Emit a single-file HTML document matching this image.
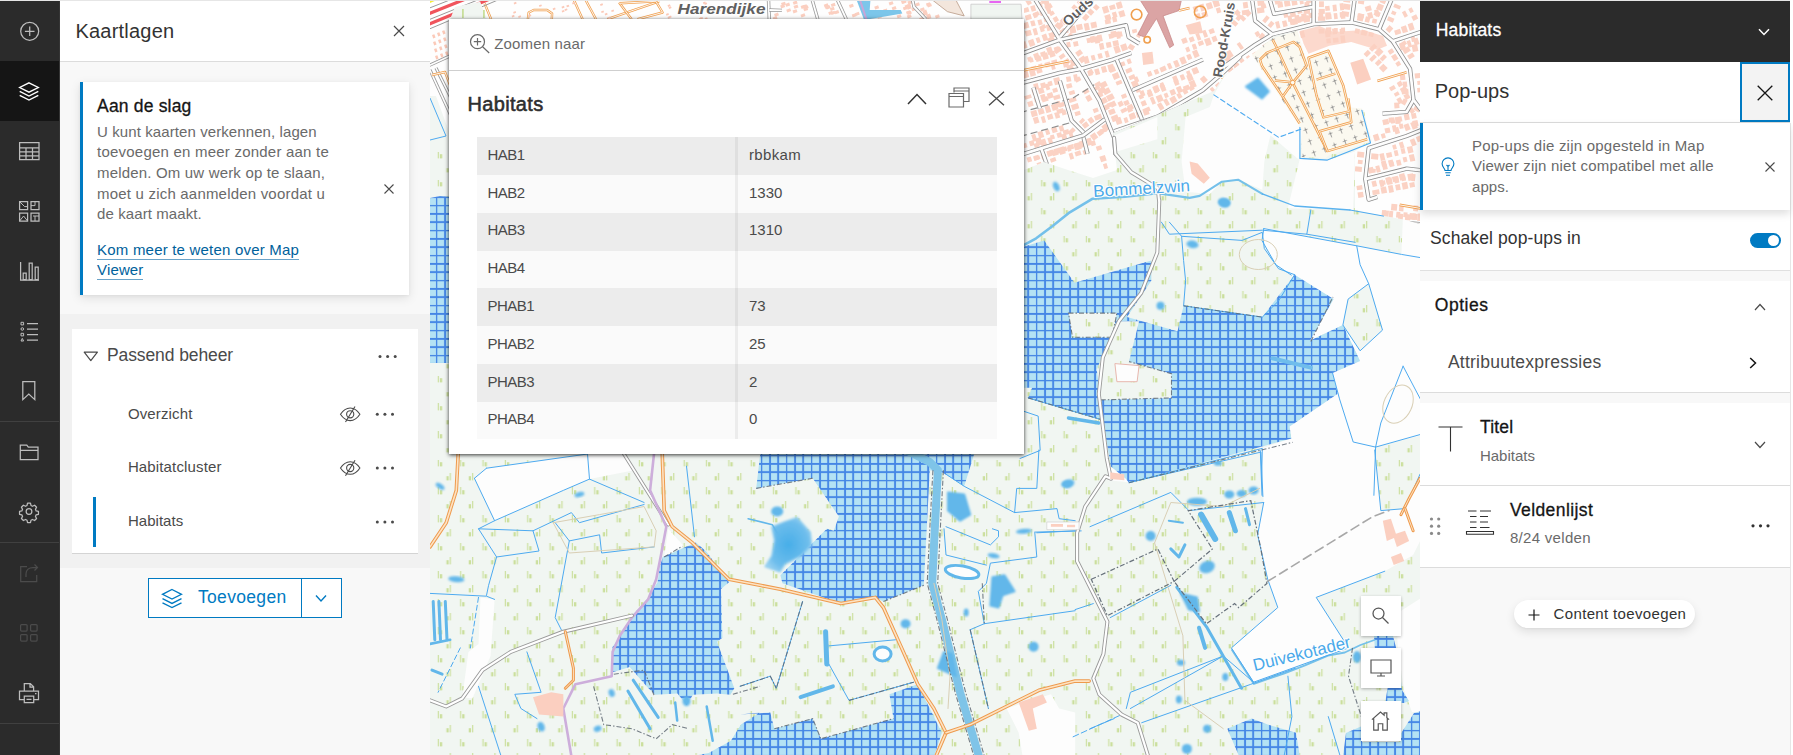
<!DOCTYPE html>
<html lang="nl">
<head>
<meta charset="utf-8">
<title>Map Viewer</title>
<style>
*{box-sizing:border-box;margin:0;padding:0}
html,body{width:1793px;height:755px;overflow:hidden;background:#fff;font-family:"Liberation Sans",sans-serif;color:#323232}
.abs{position:absolute}
#sidebar{left:0;top:0;width:60px;height:755px;background:#2b2b2b}
#sidebar .act{left:0;top:61px;width:60px;height:60px;background:#151515}
#sidebar .sep{left:0;width:60px;height:1px;background:#404040}
#sidebar svg{position:absolute;overflow:visible}
#lpanel{left:60px;top:0;width:370px;height:755px;background:#f8f8f8}
#lpanel .hdr{left:0;top:0;width:370px;height:62px;background:#fff;border-bottom:1px solid #dcdcdc}
.t{position:absolute;white-space:nowrap;line-height:1;z-index:5}
#rpanel{left:1420px;top:0;width:370px;height:755px;background:#f8f8f8}
#map{left:430px;top:0;width:990px;height:755px;overflow:hidden;background:#f1f6f2}
#popup{left:449px;top:19px;width:575px;height:435px;background:#fff;box-shadow:0 1px 4px rgba(0,0,0,.8)}
.row{position:absolute;left:28px;width:520px;height:37.78px}
.row.d{background:#ececec}
.row.l{background:#fafafa}
.rt{position:absolute;font-size:15px;color:#4a4a4a;line-height:1;white-space:nowrap}
.rt.k{left:38.500px}
.rt.v{left:300px}
.mbtn{position:absolute;left:1361px;width:40px;height:40px;background:#fff;box-shadow:0 1px 3px rgba(0,0,0,.3)}
</style>
</head>
<body>
<div class="abs" style="left:0;top:0;width:1790px;height:1px;background:#e6e6e6;z-index:20"></div>
<div id="sidebar" class="abs">
<div class="abs act"></div>
<div class="abs sep" style="top:421px"></div>
<div class="abs sep" style="top:542px"></div>
<div class="abs sep" style="top:723px"></div>
<div class="abs" style="left:59px;top:0;width:1px;height:755px;background:#353535"></div>
<svg style="left:0;top:0" width="60" height="755" viewBox="0 0 60 755" fill="none" stroke="#bdbdbd" stroke-width="1.25">
<!-- add -->
<circle cx="29.7" cy="31.3" r="9"/><path d="M29.7 26.5v9.6M24.9 31.3h9.6"/>
<!-- layers active -->
<g stroke="#fff" stroke-width="1.4"><path d="M29 82.8l9.3 4.7-9.3 4.7-9.3-4.7z"/><path d="M19.700 91.300l9.300 4.700 9.300-4.700"/><path d="M19.700 95.300l9.300 4.700 9.300-4.700"/></g>
<!-- table -->
<path d="M19.600 142.600h19.400v17h-19.400zM19.600 147.800h19.400M19.600 151.800h19.400M19.600 155.800h19.400M26 147.800v11.800M32.500 147.800v11.800"/>
<!-- basemap -->
<path d="M19.600 201.600h8v8h-8zM31 201.600h8v8h-8zM19.600 213h8v8h-8zM31 213h8v8h-8z"/>
<path d="M19.600 201.600l5 5h3M35 201.600v4h-4M19.600 221l4-5 4 5M33 216h6M35 216v5" stroke-width="1"/>
<!-- chart -->
<path d="M20.600 262v18h18.400"/><path d="M23.200 273h3v6.600h-3zM29.200 263h3v16.600h-3zM35.200 267h3v12.600h-3z"/>
<!-- legend -->
<path d="M27 323.500h11M27 329h11M27 334.500h11M27 340h11"/><path d="M21 322.300h2.600v2.600h-2.600zM21 333.300h2.600v2.600h-2.600z" stroke-width="1"/><circle cx="22.300" cy="329" r="1.300" stroke-width="1"/><path d="M21 341l1.300-2.600 1.300 2.600z" stroke-width="1"/>
<!-- bookmark -->
<path d="M22.800 381.600h12v18l-6-5.500-6 5.500z"/>
<!-- folder -->
<path d="M20.300 459.600v-14.500h6.500l1.500 2h9.700v12.500zM20.300 450.300h17.700"/>
<!-- gear -->
<g transform="translate(29 511.500) scale(.86) translate(-29 -511.500)" stroke-width="1.450"><circle cx="29" cy="511.500" r="3.300"/>
<path d="M27.300 501.800h3.400l.6 2.700 1.700.9 2.500-1.200 2.300 2.400-1.300 2.400.8 1.800 2.700.6v3.400l-2.700.6-.8 1.800 1.300 2.400-2.300 2.400-2.500-1.200-1.700.9-.6 2.700h-3.400l-.6-2.700-1.700-.9-2.500 1.200-2.300-2.400 1.300-2.400-.8-1.800-2.700-.6v-3.400l2.700-.6.8-1.800-1.300-2.400 2.300-2.400 2.500 1.200 1.700-.9z" stroke-linejoin="round"/></g>
<!-- share disabled -->
<g stroke="#4b4b4b"><path d="M27 566.500h-6.300v15h16v-6.500"/><path d="M26 577v-3c0-4 3-6.500 7-6.500h4.500M34.500 564.500l3 3-3 3"/></g>
<!-- grid disabled -->
<g stroke="#4b4b4b"><rect x="20.600" y="624.600" width="6.500" height="6.500" rx="1"/><rect x="30.600" y="624.600" width="6.500" height="6.500" rx="1"/><rect x="20.600" y="634.600" width="6.500" height="6.500" rx="1"/><rect x="30.600" y="634.600" width="6.500" height="6.500" rx="1"/></g>
<!-- print -->
<path d="M24.300 691v-7.500h6l3.300 3.300v4.200M30 683.500v3.500h3.500"/><path d="M24 699.500h-4.500v-8.500h19v8.500h-4.500"/><path d="M24.300 696h9.400v6.500h-9.400zM26.500 699.300h5M35 693.500h1.500"/>
</svg>
</div>
<div id="map" class="abs"><svg width="990" height="755" viewBox="430 0 990 755" style="position:absolute;left:0;top:0">
<defs>
<pattern id="tick" x="1106.5" y="543" width="22.35" height="28" patternUnits="userSpaceOnUse">
<g fill="#cee1a4"><rect x="1.700" y="0" width="1.300" height="7.400"/><rect x="3.900" y="3.200" width="2.300" height="4.200" fill="#cbdf9d"/>
<rect x="10.400" y="17.200" width="2.300" height="4.200" fill="#cbdf9d"/><rect x="13.600" y="14" width="1.300" height="7.400"/></g>
</pattern>
<pattern id="hatch" x="1185.95" y="354.95" width="25" height="25" patternUnits="userSpaceOnUse">
<rect width="25" height="25" fill="#b4e2f4"/>
<g fill="#4486e5"><rect x="0" width="1.300" height="25"/><rect x="8.150" width="1.900" height="25"/><rect x="16.250" width="1.900" height="25"/>
<rect y="0" width="25" height="1.300"/><rect y="8" width="25" height="1.900"/><rect y="16.200" width="25" height="1.900"/></g>
</pattern>
<pattern id="urb" width="12" height="10" patternUnits="userSpaceOnUse" patternTransform="rotate(-24)">
<rect width="12" height="10" fill="#fefefe"/><rect x="1" y="1.500" width="4.200" height="4.200" fill="#fbd0c1"/><rect x="6.800" y="1.500" width="4.200" height="4.200" fill="#fbd0c1"/>
</pattern>
<pattern id="urbt" width="14" height="9" patternUnits="userSpaceOnUse" patternTransform="rotate(-20)">
<rect width="14" height="9" fill="#fefefe"/><rect x="1" y="1.500" width="3" height="3" fill="#fbd0c1"/><path d="M7 0v9M0 7h14" stroke="#f3a968" stroke-width="1" fill="none"/>
</pattern>
<pattern id="cem" width="11" height="12" patternUnits="userSpaceOnUse" patternTransform="rotate(-20)">
<rect width="11" height="12" fill="#fbf9f0"/><path d="M5.500 2.500v6M3.500 4.500h4" stroke="#8a8a8a" stroke-width=".8" fill="none"/>
</pattern>
<radialGradient id="lake" cx="50%" cy="50%" r="60%"><stop offset="0" stop-color="#48aee8"/><stop offset=".7" stop-color="#6dbdec"/><stop offset="1" stop-color="#9dd3f2"/></radialGradient>
<filter id="soft" x="-20%" y="-20%" width="140%" height="140%"><feGaussianBlur stdDeviation="0.9"/></filter>
</defs>
<rect x="430" y="0" width="990" height="755" fill="#f1f6f2"/>
<rect x="430" y="0" width="990" height="755" fill="url(#tick)"/>
<polygon points="474.4,478.3 486.5,468.2 587.5,454.0 623.9,454.0 634.0,470.2 589.5,479.1 563.3,490.4 494.6,520.7" fill="#fdfdfd"/>
<polygon points="480.5,597.4 494.6,599.4 490.6,656.0 472.4,698.4 462.3,697.2 468.4,651.9 478.5,643.9" fill="#fdfdfd"/>
<polygon points="668.3,528.8 683.6,546.1 664.2,557.0" fill="#fdfdfd"/>
<polygon points="1006.6,708.5 1051.0,694.3 1059.1,708.5 1075.2,712.5 1075.2,756.9 1022.7,756.9 1018.7,732.7" fill="#fdfdfd"/>
<polygon points="1114.9,135.3 1157.3,117.1 1157.3,139.3 1116.9,151.5" fill="#fdfdfd"/>
<polygon points="1185.6,117.1 1209.8,107.0 1213.9,94.9 1224.0,76.7 1254.2,52.5 1302.7,129.2 1298.7,159.5 1270.4,135.3 1264.3,161.6 1262.3,189.8 1238.1,179.7 1221.9,181.7 1209.8,193.9 1185.6,191.8 1181.6,161.6" fill="#fdfdfd"/>
<polygon points="1299.9,158.4 1327.4,160.1 1355.0,151.5 1353.2,210.1 1287.8,208.3" fill="#fdfdfd"/>
<polygon points="1263.8,228.6 1356.7,245.8 1401.4,254.4 1403.1,213.1 1422.1,213.1 1422.1,435.1 1375.6,447.1 1373.9,495.3 1262.0,495.3 1260.3,450.6 1250.0,452.3 1291.3,438.5 1289.6,426.5 1337.7,393.8 1332.6,373.1 1360.1,361.1 1342.9,325.0 1310.2,340.4 1333.6,299.1 1291.3,275.1 1275.8,264.7 1262.0,240.6" fill="#fdfdfd"/>
<polygon points="1261.6,450.0 1374.7,450.0 1380.8,510.6 1405.0,508.6 1420.0,474.2 1425.2,474.2 1425.2,530.8 1413.1,555.0 1384.8,571.2 1316.2,597.4 1348.5,647.9 1253.6,682.2 1231.4,647.9 1277.8,607.5 1267.7,579.2 1257.6,534.8 1263.7,502.5" fill="#fdfdfd"/>
<polygon points="1396.0,614.0 1421.0,598.0 1421.0,712.0 1412.0,712.0 1404.0,690.0 1398.0,650.0" fill="#fdfdfd"/>
<polygon points="1108.2,468.2 1126.3,468.2 1128.4,482.3 1108.2,480.3" fill="#fdfdfd"/>
<polygon points="1342.9,325.0 1348.1,299.1 1368.7,283.7 1382.5,330.1 1360.1,350.8" fill="#f1f6f2"/><polygon points="1342.9,325.0 1348.1,299.1 1368.7,283.7 1382.5,330.1 1360.1,350.8" fill="url(#tick)"/>
<clipPath id="uclip"><polygon points="1024.0,0.0 1420.0,0.0 1420.0,224.0 1406.0,220.0 1379.0,215.0 1355.0,210.0 1355.0,151.0 1370.0,143.0 1364.0,110.0 1352.0,110.0 1329.0,50.0 1303.0,60.0 1296.0,31.0 1274.0,36.0 1255.0,53.0 1224.0,76.0 1214.0,91.0 1190.0,101.0 1157.0,115.0 1113.0,133.0 1115.0,153.0 1117.0,170.0 1093.0,178.0 1068.0,170.0 1044.0,162.0 1024.0,170.0"/></clipPath>
<polygon points="1024.0,0.0 1420.0,0.0 1420.0,224.0 1406.0,220.0 1379.0,215.0 1355.0,210.0 1355.0,151.0 1370.0,143.0 1364.0,110.0 1352.0,110.0 1329.0,50.0 1303.0,60.0 1296.0,31.0 1274.0,36.0 1255.0,53.0 1224.0,76.0 1214.0,91.0 1190.0,101.0 1157.0,115.0 1113.0,133.0 1115.0,153.0 1117.0,170.0 1093.0,178.0 1068.0,170.0 1044.0,162.0 1024.0,170.0" fill="#fefefe"/>
<g clip-path="url(#uclip)">
<g fill="#fbd2c4">
<rect x="1026.0" y="-0.2" width="5.2" height="4.6" transform="rotate(59 1028.6 2.2)"/>
<rect x="1038.9" y="-8.2" width="3.7" height="5.9" transform="rotate(59 1040.8 -5.3)"/>
<rect x="1042.2" y="-1.7" width="3.8" height="5.7" transform="rotate(59 1044.1 1.1)"/>
<rect x="1034.1" y="11.3" width="4.2" height="6.3" transform="rotate(59 1036.2 14.4)"/>
<rect x="1046.3" y="3.2" width="4.6" height="7.3" transform="rotate(59 1048.6 6.8)"/>
<rect x="1050.0" y="10.9" width="4.0" height="4.8" transform="rotate(59 1051.9 13.2)"/>
<rect x="1040.7" y="24.2" width="4.1" height="6.1" transform="rotate(59 1042.8 27.3)"/>
<rect x="1053.3" y="17.0" width="5.0" height="4.6" transform="rotate(59 1055.8 19.3)"/>
<rect x="1057.6" y="22.5" width="4.7" height="5.3" transform="rotate(59 1060.0 25.2)"/>
<rect x="1048.6" y="35.9" width="4.3" height="6.8" transform="rotate(59 1050.8 39.3)"/>
<rect x="1060.6" y="28.7" width="5.0" height="6.0" transform="rotate(59 1063.1 31.7)"/>
<rect x="1055.7" y="46.9" width="4.3" height="7.3" transform="rotate(54 1057.9 50.5)"/>
<rect x="1060.1" y="53.4" width="4.0" height="5.9" transform="rotate(54 1062.1 56.4)"/>
<rect x="1063.8" y="58.7" width="5.0" height="7.0" transform="rotate(54 1066.3 62.2)"/>
<rect x="1076.5" y="49.9" width="5.1" height="6.1" transform="rotate(54 1079.0 53.0)"/>
<rect x="1067.4" y="65.2" width="6.0" height="5.8" transform="rotate(54 1070.4 68.1)"/>
<rect x="1079.8" y="56.2" width="5.4" height="6.3" transform="rotate(54 1082.4 59.4)"/>
<rect x="1075.7" y="76.7" width="4.3" height="5.6" transform="rotate(60 1077.9 79.5)"/>
<rect x="1088.2" y="69.6" width="4.8" height="4.9" transform="rotate(60 1090.6 72.1)"/>
<rect x="1084.0" y="88.6" width="4.2" height="5.6" transform="rotate(60 1086.1 91.4)"/>
<rect x="1095.6" y="81.4" width="4.7" height="6.0" transform="rotate(60 1097.9 84.5)"/>
<rect x="1085.9" y="95.6" width="5.8" height="5.2" transform="rotate(60 1088.8 98.2)"/>
<rect x="1099.1" y="86.8" width="5.8" height="7.3" transform="rotate(60 1102.0 90.5)"/>
<rect x="1093.7" y="107.8" width="4.2" height="5.1" transform="rotate(69 1095.8 110.3)"/>
<rect x="1107.3" y="102.8" width="4.3" height="4.4" transform="rotate(69 1109.4 105.0)"/>
<rect x="1095.6" y="113.5" width="5.0" height="7.3" transform="rotate(69 1098.1 117.2)"/>
<rect x="1109.4" y="108.5" width="5.1" height="6.4" transform="rotate(69 1111.9 111.7)"/>
<rect x="1112.1" y="114.9" width="5.8" height="6.8" transform="rotate(69 1115.0 118.3)"/>
<rect x="1101.4" y="127.4" width="3.9" height="6.3" transform="rotate(69 1103.4 130.6)"/>
<rect x="1119.4" y="142.5" width="4.5" height="4.6" transform="rotate(85 1121.7 144.8)"/>
<rect x="1123.3" y="152.8" width="4.5" height="4.5" transform="rotate(49 1125.6 155.0)"/>
<rect x="1117.2" y="167.4" width="4.0" height="5.2" transform="rotate(49 1119.2 170.0)"/>
<rect x="1128.6" y="156.7" width="3.9" height="6.9" transform="rotate(49 1130.6 160.2)"/>
<rect x="1131.6" y="180.2" width="4.8" height="4.7" transform="rotate(31 1134.0 182.6)"/>
<rect x="1137.5" y="183.6" width="5.7" height="4.9" transform="rotate(31 1140.3 186.0)"/>
<rect x="1144.3" y="187.1" width="4.0" height="6.0" transform="rotate(31 1146.3 190.1)"/>
<rect x="1146.7" y="192.5" width="5.8" height="6.5" transform="rotate(90 1149.6 195.8)"/>
<rect x="1163.1" y="192.4" width="4.0" height="6.7" transform="rotate(90 1165.1 195.8)"/>
<rect x="1121.6" y="133.8" width="4.4" height="5.1" transform="rotate(-18 1123.8 136.3)"/>
<rect x="1115.8" y="117.5" width="5.7" height="6.8" transform="rotate(-18 1118.7 120.9)"/>
<rect x="1128.5" y="131.0" width="4.2" height="6.0" transform="rotate(-18 1130.6 134.0)"/>
<rect x="1124.2" y="117.5" width="3.7" height="5.2" transform="rotate(-18 1126.0 120.1)"/>
<rect x="1134.4" y="128.8" width="6.0" height="5.7" transform="rotate(-18 1137.4 131.6)"/>
<rect x="1129.3" y="113.6" width="6.0" height="5.5" transform="rotate(-18 1132.3 116.4)"/>
<rect x="1142.0" y="126.2" width="4.1" height="5.0" transform="rotate(-18 1144.0 128.7)"/>
<rect x="1136.4" y="111.3" width="5.7" height="5.8" transform="rotate(-18 1139.2 114.2)"/>
<rect x="1149.2" y="124.1" width="3.8" height="6.4" transform="rotate(-18 1151.1 127.3)"/>
<rect x="1143.4" y="109.2" width="5.5" height="5.8" transform="rotate(-18 1146.1 112.1)"/>
<rect x="1166.2" y="116.2" width="4.4" height="6.8" transform="rotate(-30 1168.4 119.6)"/>
<rect x="1158.4" y="102.8" width="4.6" height="7.2" transform="rotate(-30 1160.7 106.4)"/>
<rect x="1172.2" y="112.7" width="3.9" height="4.9" transform="rotate(-30 1174.1 115.1)"/>
<rect x="1164.5" y="98.8" width="4.0" height="6.9" transform="rotate(-30 1166.5 102.2)"/>
<rect x="1178.5" y="109.1" width="4.5" height="6.0" transform="rotate(-30 1180.7 112.1)"/>
<rect x="1170.4" y="96.5" width="6.0" height="6.3" transform="rotate(-30 1173.4 99.7)"/>
<rect x="1184.8" y="105.4" width="4.7" height="7.0" transform="rotate(-30 1187.1 108.9)"/>
<rect x="1177.3" y="93.1" width="4.2" height="5.3" transform="rotate(-30 1179.4 95.7)"/>
<rect x="1190.9" y="101.9" width="4.2" height="5.7" transform="rotate(-30 1193.1 104.7)"/>
<rect x="1182.8" y="88.2" width="4.5" height="5.8" transform="rotate(-30 1185.1 91.1)"/>
<rect x="1197.2" y="98.0" width="4.7" height="7.2" transform="rotate(-30 1199.5 101.5)"/>
<rect x="1189.1" y="85.8" width="4.9" height="4.5" transform="rotate(-30 1191.6 88.0)"/>
<rect x="1211.4" y="87.1" width="3.6" height="6.8" transform="rotate(-41 1213.2 90.5)"/>
<rect x="1201.1" y="76.5" width="5.4" height="6.1" transform="rotate(-41 1203.8 79.5)"/>
<rect x="1216.5" y="82.8" width="5.0" height="6.8" transform="rotate(-41 1219.0 86.2)"/>
<rect x="1229.7" y="70.9" width="4.3" height="6.7" transform="rotate(-43 1231.8 74.2)"/>
<rect x="1219.1" y="59.9" width="5.5" height="7.1" transform="rotate(-43 1221.8 63.5)"/>
<rect x="1235.1" y="66.8" width="4.9" height="5.9" transform="rotate(-43 1237.5 69.8)"/>
<rect x="1224.8" y="55.8" width="4.9" height="5.8" transform="rotate(-43 1227.2 58.7)"/>
<rect x="1226.5" y="50.7" width="5.8" height="7.2" transform="rotate(148 1229.4 54.3)"/>
<rect x="1234.5" y="64.0" width="6.0" height="6.9" transform="rotate(148 1237.5 67.4)"/>
<rect x="1221.4" y="56.6" width="4.7" height="4.6" transform="rotate(148 1223.8 58.9)"/>
<rect x="1228.3" y="67.2" width="5.3" height="6.8" transform="rotate(148 1231.0 70.5)"/>
<rect x="1228.2" y="67.0" width="5.4" height="6.4" transform="rotate(-35 1230.9 70.2)"/>
<rect x="1219.2" y="55.3" width="6.0" height="5.1" transform="rotate(-35 1222.2 57.9)"/>
<rect x="1234.6" y="62.7" width="4.8" height="7.4" transform="rotate(-35 1237.0 66.4)"/>
<rect x="1226.5" y="51.7" width="4.7" height="5.9" transform="rotate(-35 1228.8 54.7)"/>
<rect x="1240.5" y="58.7" width="4.4" height="6.6" transform="rotate(-35 1242.7 62.0)"/>
<rect x="1247.0" y="55.5" width="3.6" height="5.4" transform="rotate(-35 1248.8 58.2)"/>
<rect x="1238.4" y="42.3" width="3.8" height="7.4" transform="rotate(-35 1240.3 46.0)"/>
<rect x="1253.3" y="52.2" width="3.9" height="5.2" transform="rotate(-35 1255.2 54.8)"/>
<rect x="1263.3" y="44.1" width="3.9" height="5.7" transform="rotate(-31 1265.3 47.0)"/>
<rect x="1255.4" y="31.6" width="4.2" height="4.8" transform="rotate(-31 1257.5 34.0)"/>
<rect x="1269.0" y="41.3" width="5.4" height="4.7" transform="rotate(-31 1271.7 43.7)"/>
<rect x="1279.6" y="36.1" width="3.8" height="7.2" transform="rotate(-14 1281.5 39.8)"/>
<rect x="1275.8" y="21.4" width="3.8" height="7.0" transform="rotate(-14 1277.8 24.8)"/>
<rect x="1282.6" y="20.6" width="4.4" height="6.1" transform="rotate(-14 1284.9 23.6)"/>
<rect x="1293.4" y="33.0" width="3.9" height="6.0" transform="rotate(-14 1295.4 36.0)"/>
<rect x="1290.0" y="20.2" width="4.0" height="4.6" transform="rotate(-14 1292.0 22.4)"/>
<rect x="1300.2" y="31.0" width="4.4" height="6.7" transform="rotate(-14 1302.4 34.3)"/>
<rect x="1296.8" y="17.4" width="4.0" height="5.4" transform="rotate(-14 1298.8 20.1)"/>
<rect x="1303.3" y="16.1" width="5.4" height="6.1" transform="rotate(-14 1306.0 19.1)"/>
<rect x="1318.6" y="28.9" width="5.9" height="4.7" transform="rotate(-3 1321.6 31.2)"/>
<rect x="1318.5" y="12.9" width="4.8" height="6.9" transform="rotate(-3 1320.9 16.4)"/>
<rect x="1326.1" y="27.3" width="5.3" height="7.3" transform="rotate(-3 1328.8 30.9)"/>
<rect x="1325.4" y="12.3" width="5.4" height="6.3" transform="rotate(-3 1328.1 15.4)"/>
<rect x="1334.1" y="28.0" width="3.7" height="4.8" transform="rotate(-3 1335.9 30.4)"/>
<rect x="1341.1" y="27.6" width="4.0" height="4.7" transform="rotate(-3 1343.1 29.9)"/>
<rect x="1339.8" y="12.1" width="5.3" height="5.2" transform="rotate(-3 1342.4 14.7)"/>
<rect x="1354.8" y="28.7" width="4.7" height="4.9" transform="rotate(14 1357.1 31.2)"/>
<rect x="1357.6" y="13.7" width="6.0" height="7.3" transform="rotate(14 1360.6 17.3)"/>
<rect x="1361.1" y="30.2" width="6.0" height="5.3" transform="rotate(14 1364.2 32.9)"/>
<rect x="1365.2" y="16.6" width="4.6" height="5.8" transform="rotate(14 1367.5 19.5)"/>
<rect x="1368.7" y="32.3" width="4.9" height="4.4" transform="rotate(14 1371.2 34.5)"/>
<rect x="1372.2" y="18.8" width="4.6" height="4.5" transform="rotate(14 1374.5 21.1)"/>
<rect x="1386.9" y="26.0" width="5.1" height="6.0" transform="rotate(41 1389.4 29.0)"/>
<rect x="1399.8" y="42.8" width="5.4" height="7.0" transform="rotate(-18 1402.5 46.3)"/>
<rect x="1394.7" y="29.6" width="6.1" height="4.8" transform="rotate(-18 1397.8 32.1)"/>
<rect x="1407.5" y="40.5" width="3.7" height="6.9" transform="rotate(-18 1409.3 44.0)"/>
<rect x="1401.7" y="25.9" width="5.4" height="6.8" transform="rotate(-18 1404.4 29.3)"/>
<rect x="1413.7" y="38.1" width="4.9" height="6.9" transform="rotate(-18 1416.1 41.5)"/>
<rect x="1408.6" y="23.2" width="5.1" height="7.1" transform="rotate(-18 1411.2 26.8)"/>
<rect x="1027.7" y="56.8" width="4.2" height="4.5" transform="rotate(-20 1029.8 59.0)"/>
<rect x="1022.7" y="41.4" width="3.9" height="6.9" transform="rotate(-20 1024.6 44.9)"/>
<rect x="1034.0" y="53.3" width="5.2" height="6.4" transform="rotate(-20 1036.5 56.5)"/>
<rect x="1028.8" y="39.6" width="5.6" height="6.6" transform="rotate(-20 1031.6 42.9)"/>
<rect x="1040.6" y="51.6" width="5.2" height="4.6" transform="rotate(-20 1043.3 53.9)"/>
<rect x="1036.3" y="37.5" width="3.8" height="5.2" transform="rotate(-20 1038.2 40.1)"/>
<rect x="1047.1" y="47.2" width="5.4" height="7.3" transform="rotate(-20 1049.8 50.9)"/>
<rect x="1042.5" y="34.2" width="4.8" height="6.5" transform="rotate(-20 1044.9 37.4)"/>
<rect x="1054.2" y="46.7" width="5.2" height="4.6" transform="rotate(-20 1056.8 49.0)"/>
<rect x="1049.0" y="32.5" width="5.5" height="5.3" transform="rotate(-20 1051.7 35.1)"/>
<rect x="1066.7" y="42.1" width="3.8" height="5.2" transform="rotate(-12 1068.6 44.7)"/>
<rect x="1062.9" y="27.9" width="5.3" height="5.3" transform="rotate(-12 1065.5 30.5)"/>
<rect x="1073.4" y="41.5" width="4.8" height="4.8" transform="rotate(-12 1075.8 43.8)"/>
<rect x="1069.7" y="26.1" width="6.0" height="7.2" transform="rotate(-12 1072.7 29.7)"/>
<rect x="1076.5" y="24.3" width="6.0" height="5.7" transform="rotate(-12 1079.5 27.2)"/>
<rect x="1086.8" y="37.8" width="6.0" height="5.0" transform="rotate(-12 1089.8 40.4)"/>
<rect x="1084.3" y="23.1" width="4.9" height="7.3" transform="rotate(-12 1086.8 26.7)"/>
<rect x="1094.6" y="36.2" width="4.9" height="7.1" transform="rotate(-12 1097.0 39.8)"/>
<rect x="1090.9" y="22.1" width="5.8" height="5.9" transform="rotate(-12 1093.8 25.0)"/>
<rect x="1108.8" y="33.7" width="4.4" height="4.8" transform="rotate(-12 1111.0 36.1)"/>
<rect x="1105.0" y="19.6" width="5.7" height="4.4" transform="rotate(-12 1107.8 21.8)"/>
<rect x="1116.2" y="31.6" width="3.9" height="7.2" transform="rotate(-12 1118.1 35.1)"/>
<rect x="1112.5" y="16.6" width="4.3" height="5.5" transform="rotate(-12 1114.7 19.3)"/>
<rect x="1117.0" y="31.7" width="5.1" height="5.5" transform="rotate(77 1119.6 34.4)"/>
<rect x="1132.8" y="28.7" width="3.7" height="4.7" transform="rotate(77 1134.6 31.0)"/>
<rect x="1128.3" y="44.6" width="5.9" height="5.1" transform="rotate(32 1131.3 47.2)"/>
<rect x="1137.1" y="32.0" width="4.1" height="5.5" transform="rotate(32 1139.1 34.8)"/>
<rect x="1068.0" y="33.5" width="5.6" height="6.3" transform="rotate(-49 1070.9 36.6)"/>
<rect x="1056.0" y="22.7" width="5.0" height="6.6" transform="rotate(-49 1058.5 26.0)"/>
<rect x="1061.0" y="17.9" width="5.5" height="6.3" transform="rotate(-49 1063.8 21.0)"/>
<rect x="1082.8" y="14.9" width="5.9" height="4.8" transform="rotate(-49 1085.8 17.3)"/>
<rect x="1073.0" y="4.8" width="4.3" height="6.6" transform="rotate(-49 1075.2 8.1)"/>
<rect x="1088.1" y="9.4" width="5.2" height="5.3" transform="rotate(-49 1090.8 12.1)"/>
<rect x="1077.9" y="0.1" width="4.0" height="4.9" transform="rotate(-49 1079.9 2.6)"/>
<rect x="1093.9" y="4.8" width="4.8" height="5.1" transform="rotate(-49 1096.3 7.4)"/>
<rect x="1081.5" y="-5.9" width="4.7" height="4.8" transform="rotate(-49 1083.9 -3.5)"/>
<rect x="1087.9" y="71.0" width="4.5" height="4.7" transform="rotate(-16 1090.2 73.4)"/>
<rect x="1083.8" y="56.4" width="5.0" height="7.1" transform="rotate(-16 1086.3 60.0)"/>
<rect x="1094.9" y="68.8" width="4.6" height="6.0" transform="rotate(-16 1097.2 71.8)"/>
<rect x="1091.3" y="55.2" width="3.8" height="5.2" transform="rotate(-16 1093.1 57.8)"/>
<rect x="1101.6" y="66.2" width="4.9" height="6.3" transform="rotate(-16 1104.0 69.4)"/>
<rect x="1098.0" y="53.4" width="4.3" height="5.1" transform="rotate(-16 1100.1 56.0)"/>
<rect x="1108.1" y="64.4" width="6.0" height="6.9" transform="rotate(-16 1111.1 67.9)"/>
<rect x="1105.3" y="51.0" width="3.7" height="6.5" transform="rotate(-16 1107.1 54.3)"/>
<rect x="1119.9" y="61.9" width="5.1" height="4.4" transform="rotate(-20 1122.4 64.1)"/>
<rect x="1114.3" y="45.9" width="5.7" height="7.0" transform="rotate(-20 1117.2 49.4)"/>
<rect x="1127.2" y="58.9" width="3.9" height="4.9" transform="rotate(-20 1129.1 61.3)"/>
<rect x="1121.1" y="44.0" width="6.0" height="6.6" transform="rotate(-20 1124.1 47.3)"/>
<rect x="1110.0" y="66.7" width="4.7" height="6.1" transform="rotate(67 1112.4 69.7)"/>
<rect x="1113.0" y="72.9" width="5.9" height="6.3" transform="rotate(67 1116.0 76.0)"/>
<rect x="1126.7" y="67.4" width="4.2" height="6.3" transform="rotate(67 1128.9 70.6)"/>
<rect x="1117.1" y="79.6" width="3.8" height="6.0" transform="rotate(67 1119.0 82.6)"/>
<rect x="1130.0" y="74.0" width="4.2" height="6.2" transform="rotate(67 1132.0 77.1)"/>
<rect x="1132.0" y="80.5" width="6.0" height="6.3" transform="rotate(67 1134.9 83.6)"/>
<rect x="1121.9" y="93.5" width="4.2" height="5.1" transform="rotate(67 1124.0 96.1)"/>
<rect x="1135.9" y="87.9" width="4.4" height="4.5" transform="rotate(67 1138.1 90.1)"/>
<rect x="1124.2" y="100.2" width="4.7" height="5.2" transform="rotate(67 1126.5 102.8)"/>
<rect x="1139.2" y="94.4" width="4.2" height="4.5" transform="rotate(67 1141.2 96.6)"/>
<rect x="1127.1" y="106.8" width="5.3" height="5.0" transform="rotate(67 1129.7 109.3)"/>
<rect x="1141.3" y="100.9" width="4.9" height="5.0" transform="rotate(67 1143.8 103.4)"/>
<rect x="1129.8" y="113.3" width="5.7" height="5.1" transform="rotate(67 1132.7 115.9)"/>
<rect x="1144.4" y="106.4" width="4.3" height="7.3" transform="rotate(67 1146.6 110.0)"/>
<rect x="1140.3" y="90.7" width="4.2" height="5.7" transform="rotate(-23 1142.4 93.5)"/>
<rect x="1134.4" y="76.8" width="4.0" height="5.6" transform="rotate(-23 1136.3 79.5)"/>
<rect x="1147.5" y="89.5" width="4.0" height="4.6" transform="rotate(-23 1149.5 91.8)"/>
<rect x="1153.2" y="85.5" width="5.8" height="6.6" transform="rotate(-23 1156.1 88.8)"/>
<rect x="1147.4" y="71.4" width="4.4" height="5.0" transform="rotate(-23 1149.6 73.8)"/>
<rect x="1160.7" y="82.5" width="3.7" height="6.4" transform="rotate(-23 1162.6 85.7)"/>
<rect x="1154.3" y="69.3" width="4.4" height="4.9" transform="rotate(-23 1156.5 71.8)"/>
<rect x="1160.1" y="66.6" width="6.0" height="4.8" transform="rotate(-23 1163.1 69.0)"/>
<rect x="1173.2" y="75.8" width="4.5" height="6.9" transform="rotate(-23 1175.4 79.2)"/>
<rect x="1167.8" y="63.1" width="3.7" height="5.8" transform="rotate(-23 1169.7 66.0)"/>
<rect x="1180.5" y="74.6" width="4.1" height="5.5" transform="rotate(-23 1182.5 77.4)"/>
<rect x="1174.2" y="60.3" width="4.6" height="6.8" transform="rotate(-23 1176.6 63.7)"/>
<rect x="1186.7" y="70.9" width="3.7" height="4.6" transform="rotate(-23 1188.5 73.2)"/>
<rect x="1180.3" y="57.0" width="5.5" height="7.1" transform="rotate(-23 1183.0 60.5)"/>
<rect x="1192.3" y="67.6" width="6.0" height="6.3" transform="rotate(-23 1195.3 70.7)"/>
<rect x="1187.1" y="54.3" width="4.4" height="5.2" transform="rotate(-23 1189.3 57.0)"/>
<rect x="1193.2" y="50.2" width="5.2" height="7.2" transform="rotate(-23 1195.8 53.8)"/>
<rect x="1022.4" y="70.7" width="6.0" height="7.3" transform="rotate(-15 1025.4 74.3)"/>
<rect x="1033.8" y="83.6" width="4.7" height="5.9" transform="rotate(-15 1036.1 86.5)"/>
<rect x="1029.7" y="69.6" width="5.6" height="6.6" transform="rotate(-15 1032.5 72.9)"/>
<rect x="1040.7" y="82.8" width="5.1" height="5.4" transform="rotate(-15 1043.3 85.5)"/>
<rect x="1036.6" y="68.5" width="5.6" height="4.6" transform="rotate(-15 1039.4 70.8)"/>
<rect x="1048.1" y="81.3" width="4.2" height="4.6" transform="rotate(-15 1050.3 83.6)"/>
<rect x="1054.0" y="77.6" width="6.1" height="7.1" transform="rotate(-15 1057.0 81.1)"/>
<rect x="1051.4" y="64.9" width="3.8" height="4.7" transform="rotate(-15 1053.3 67.2)"/>
<rect x="1066.3" y="76.6" width="4.7" height="5.1" transform="rotate(-11 1068.7 79.2)"/>
<rect x="1063.2" y="60.6" width="5.3" height="6.6" transform="rotate(-11 1065.8 63.9)"/>
<rect x="1073.8" y="74.3" width="3.9" height="6.9" transform="rotate(-11 1075.7 77.8)"/>
<rect x="1070.6" y="59.4" width="4.5" height="6.6" transform="rotate(-11 1072.9 62.7)"/>
<rect x="1053.0" y="87.7" width="4.2" height="4.9" transform="rotate(73 1055.1 90.2)"/>
<rect x="1067.0" y="83.1" width="4.4" height="5.6" transform="rotate(73 1069.2 85.9)"/>
<rect x="1054.7" y="93.8" width="4.2" height="6.8" transform="rotate(73 1056.8 97.2)"/>
<rect x="1070.0" y="89.7" width="3.9" height="5.8" transform="rotate(73 1071.9 92.6)"/>
<rect x="1055.4" y="102.0" width="5.9" height="4.5" transform="rotate(73 1058.4 104.2)"/>
<rect x="1070.6" y="96.3" width="4.1" height="7.3" transform="rotate(73 1072.7 99.9)"/>
<rect x="1058.0" y="107.7" width="4.5" height="7.0" transform="rotate(73 1060.3 111.2)"/>
<rect x="1072.2" y="103.1" width="5.5" height="7.2" transform="rotate(73 1075.0 106.8)"/>
<rect x="1075.5" y="110.7" width="4.1" height="5.5" transform="rotate(73 1077.6 113.5)"/>
<rect x="1070.0" y="127.8" width="4.2" height="6.2" transform="rotate(45 1072.1 130.9)"/>
<rect x="1080.2" y="118.3" width="3.6" height="5.4" transform="rotate(45 1082.0 121.0)"/>
<rect x="1027.2" y="157.0" width="4.4" height="5.0" transform="rotate(-17 1029.3 159.5)"/>
<rect x="1023.1" y="143.2" width="3.8" height="4.7" transform="rotate(-17 1025.0 145.6)"/>
<rect x="1033.8" y="155.5" width="5.2" height="4.7" transform="rotate(-17 1036.4 157.9)"/>
<rect x="1029.5" y="140.6" width="4.6" height="5.2" transform="rotate(-17 1031.8 143.2)"/>
<rect x="1041.3" y="153.3" width="4.4" height="6.1" transform="rotate(-17 1043.5 156.3)"/>
<rect x="1035.9" y="137.8" width="5.8" height="7.4" transform="rotate(-17 1038.8 141.5)"/>
<rect x="1047.3" y="150.5" width="5.4" height="5.0" transform="rotate(-17 1050.0 153.0)"/>
<rect x="1054.1" y="148.4" width="5.7" height="5.6" transform="rotate(-17 1056.9 151.2)"/>
<rect x="1050.5" y="134.9" width="4.0" height="4.4" transform="rotate(-17 1052.5 137.1)"/>
<rect x="1061.0" y="147.1" width="5.9" height="4.7" transform="rotate(-17 1063.9 149.4)"/>
<rect x="1057.0" y="132.7" width="4.9" height="4.8" transform="rotate(-17 1059.4 135.1)"/>
<rect x="1067.8" y="144.7" width="5.9" height="4.7" transform="rotate(-17 1070.7 147.1)"/>
<rect x="1063.1" y="129.8" width="6.0" height="5.0" transform="rotate(-17 1066.1 132.3)"/>
<rect x="1074.8" y="142.7" width="6.0" height="5.8" transform="rotate(-17 1077.8 145.6)"/>
<rect x="1091.2" y="133.3" width="5.9" height="6.3" transform="rotate(-37 1094.1 136.5)"/>
<rect x="1082.7" y="122.5" width="5.6" height="5.1" transform="rotate(-37 1085.5 125.0)"/>
<rect x="1097.4" y="130.3" width="5.7" height="4.9" transform="rotate(-37 1100.3 132.7)"/>
<rect x="1088.6" y="117.6" width="4.9" height="5.6" transform="rotate(-37 1091.0 120.4)"/>
<rect x="1102.8" y="124.1" width="5.4" height="7.1" transform="rotate(-37 1105.5 127.6)"/>
<rect x="1026.1" y="93.6" width="3.7" height="6.9" transform="rotate(73 1028.0 97.1)"/>
<rect x="1027.8" y="101.2" width="5.2" height="5.3" transform="rotate(73 1030.4 103.9)"/>
<rect x="1042.6" y="96.1" width="4.7" height="6.4" transform="rotate(73 1045.0 99.3)"/>
<rect x="1035.0" y="154.9" width="3.7" height="6.3" transform="rotate(70 1036.8 158.1)"/>
<rect x="1047.7" y="149.8" width="5.5" height="6.7" transform="rotate(70 1050.4 153.2)"/>
<rect x="1037.2" y="162.4" width="4.8" height="4.7" transform="rotate(70 1039.6 164.7)"/>
<rect x="1051.2" y="157.0" width="3.8" height="5.7" transform="rotate(70 1053.1 159.9)"/>
<rect x="1076.3" y="144.5" width="5.2" height="4.6" transform="rotate(76 1078.9 146.8)"/>
<rect x="1090.7" y="141.0" width="4.9" height="4.6" transform="rotate(76 1093.2 143.3)"/>
<rect x="1242.5" y="2.7" width="6.0" height="4.8" transform="rotate(82 1245.5 5.1)"/>
<rect x="1258.2" y="-0.5" width="5.4" height="6.8" transform="rotate(82 1260.9 2.9)"/>
<rect x="1243.1" y="8.7" width="4.8" height="7.3" transform="rotate(82 1245.6 12.4)"/>
<rect x="1257.9" y="6.6" width="5.6" height="7.2" transform="rotate(82 1260.6 10.2)"/>
<rect x="1264.0" y="15.7" width="4.0" height="7.1" transform="rotate(39 1266.0 19.2)"/>
<rect x="1259.7" y="33.2" width="4.0" height="5.9" transform="rotate(39 1261.7 36.2)"/>
<rect x="1268.9" y="21.5" width="4.3" height="5.9" transform="rotate(39 1271.0 24.4)"/>
<rect x="1304.8" y="1.7" width="4.1" height="4.9" transform="rotate(90 1306.9 4.2)"/>
<rect x="1318.5" y="1.7" width="5.8" height="4.9" transform="rotate(90 1321.4 4.2)"/>
<rect x="1304.3" y="8.2" width="4.9" height="6.3" transform="rotate(90 1306.8 11.4)"/>
<rect x="1319.2" y="8.3" width="5.0" height="6.1" transform="rotate(90 1321.7 11.4)"/>
<rect x="1303.7" y="15.4" width="6.1" height="6.3" transform="rotate(90 1306.8 18.6)"/>
<rect x="1319.5" y="14.9" width="4.3" height="7.4" transform="rotate(90 1321.6 18.6)"/>
<rect x="1380.4" y="-2.1" width="5.5" height="5.7" transform="rotate(113 1383.2 0.7)"/>
<rect x="1395.3" y="3.2" width="3.7" height="6.9" transform="rotate(113 1397.2 6.6)"/>
<rect x="1376.9" y="4.1" width="6.1" height="6.2" transform="rotate(113 1380.0 7.2)"/>
<rect x="1391.9" y="10.7" width="3.6" height="4.5" transform="rotate(113 1393.7 13.0)"/>
<rect x="1374.9" y="10.9" width="4.7" height="5.9" transform="rotate(113 1377.2 13.8)"/>
<rect x="1388.6" y="16.3" width="4.2" height="6.4" transform="rotate(113 1390.7 19.5)"/>
<rect x="1388.8" y="48.9" width="4.5" height="5.1" transform="rotate(58 1391.0 51.4)"/>
<rect x="1401.3" y="40.6" width="4.1" height="6.3" transform="rotate(58 1403.3 43.7)"/>
<rect x="1391.8" y="55.0" width="5.9" height="5.1" transform="rotate(58 1394.8 57.5)"/>
<rect x="1403.9" y="46.7" width="5.2" height="7.0" transform="rotate(58 1406.5 50.2)"/>
<rect x="1396.1" y="61.7" width="4.3" height="4.4" transform="rotate(58 1398.3 63.9)"/>
<rect x="1408.7" y="52.8" width="4.5" height="6.3" transform="rotate(58 1410.9 56.0)"/>
<rect x="1400.0" y="74.8" width="5.4" height="5.1" transform="rotate(84 1402.7 77.3)"/>
<rect x="1415.2" y="72.9" width="4.9" height="5.6" transform="rotate(84 1417.6 75.7)"/>
<rect x="1402.2" y="82.1" width="5.5" height="4.4" transform="rotate(84 1404.9 84.3)"/>
<rect x="1417.9" y="80.2" width="4.0" height="5.0" transform="rotate(84 1419.8 82.7)"/>
<rect x="1402.4" y="88.1" width="5.2" height="6.8" transform="rotate(84 1405.0 91.6)"/>
<rect x="1417.5" y="87.7" width="4.4" height="4.5" transform="rotate(84 1419.6 89.9)"/>
<rect x="1409.0" y="108.5" width="5.4" height="4.4" transform="rotate(53 1411.7 110.7)"/>
<rect x="1422.0" y="97.9" width="4.8" height="6.6" transform="rotate(53 1424.4 101.2)"/>
<rect x="1388.7" y="117.6" width="3.9" height="5.1" transform="rotate(-4 1390.6 120.1)"/>
<rect x="1395.2" y="117.0" width="5.3" height="6.9" transform="rotate(-4 1397.8 120.5)"/>
<rect x="1394.3" y="102.6" width="5.0" height="5.7" transform="rotate(-4 1396.8 105.5)"/>
<rect x="1414.8" y="105.9" width="4.3" height="6.3" transform="rotate(-60 1416.9 109.1)"/>
<rect x="1401.4" y="99.6" width="5.8" height="4.4" transform="rotate(-60 1404.3 101.8)"/>
<rect x="1411.4" y="121.8" width="5.5" height="7.2" transform="rotate(158 1414.1 125.4)"/>
<rect x="1416.6" y="136.0" width="5.8" height="5.4" transform="rotate(158 1419.5 138.7)"/>
<rect x="1404.5" y="123.8" width="5.2" height="6.5" transform="rotate(158 1407.1 127.1)"/>
<rect x="1410.8" y="138.8" width="4.8" height="6.9" transform="rotate(158 1413.2 142.3)"/>
<rect x="1394.6" y="127.3" width="4.7" height="6.6" transform="rotate(162 1396.9 130.6)"/>
<rect x="1399.5" y="142.0" width="4.1" height="6.3" transform="rotate(162 1401.6 145.2)"/>
<rect x="1392.8" y="144.8" width="3.7" height="4.7" transform="rotate(162 1394.6 147.1)"/>
<rect x="1381.5" y="133.5" width="4.0" height="4.5" transform="rotate(162 1383.4 135.8)"/>
<rect x="1373.8" y="134.2" width="5.3" height="6.6" transform="rotate(162 1376.4 137.5)"/>
<rect x="1357.8" y="151.4" width="5.6" height="6.9" transform="rotate(96 1360.7 154.8)"/>
<rect x="1371.8" y="152.8" width="5.8" height="7.1" transform="rotate(96 1374.7 156.4)"/>
<rect x="1358.2" y="159.7" width="4.1" height="4.7" transform="rotate(96 1360.3 162.0)"/>
<rect x="1355.8" y="165.6" width="5.2" height="6.9" transform="rotate(96 1358.4 169.1)"/>
<rect x="1371.5" y="168.4" width="3.8" height="4.7" transform="rotate(96 1373.4 170.7)"/>
<rect x="1357.4" y="184.9" width="4.4" height="5.7" transform="rotate(81 1359.6 187.7)"/>
<rect x="1358.0" y="192.1" width="5.4" height="5.5" transform="rotate(81 1360.7 194.8)"/>
<rect x="1373.4" y="188.8" width="4.9" height="7.0" transform="rotate(81 1375.9 192.3)"/>
<rect x="1372.0" y="180.9" width="4.6" height="5.7" transform="rotate(-14 1374.3 183.8)"/>
<rect x="1368.2" y="167.2" width="5.4" height="6.0" transform="rotate(-14 1370.9 170.2)"/>
<rect x="1379.7" y="179.9" width="3.8" height="6.9" transform="rotate(-14 1381.6 183.3)"/>
<rect x="1376.0" y="165.6" width="4.1" height="6.7" transform="rotate(-14 1378.0 169.0)"/>
<rect x="1385.8" y="177.3" width="4.8" height="5.9" transform="rotate(-14 1388.3 180.2)"/>
<rect x="1382.5" y="164.2" width="4.8" height="5.4" transform="rotate(-14 1384.9 166.9)"/>
<rect x="1392.4" y="176.3" width="6.0" height="5.3" transform="rotate(-14 1395.3 178.9)"/>
<rect x="1389.3" y="162.0" width="4.8" height="4.7" transform="rotate(-14 1391.7 164.4)"/>
<rect x="1399.5" y="173.6" width="5.6" height="6.5" transform="rotate(-14 1402.3 176.9)"/>
<rect x="1396.5" y="160.0" width="4.5" height="5.6" transform="rotate(-14 1398.7 162.8)"/>
<rect x="1411.5" y="174.0" width="3.8" height="7.1" transform="rotate(6 1413.4 177.6)"/>
<rect x="1379.7" y="225.2" width="5.9" height="5.9" transform="rotate(5 1382.6 228.1)"/>
<rect x="1381.8" y="210.1" width="4.2" height="5.8" transform="rotate(5 1383.9 213.0)"/>
<rect x="1386.9" y="226.4" width="5.5" height="6.3" transform="rotate(5 1389.7 229.5)"/>
<rect x="1389.0" y="211.0" width="4.0" height="6.9" transform="rotate(5 1391.0 214.5)"/>
<rect x="1394.9" y="227.3" width="4.0" height="5.7" transform="rotate(5 1396.9 230.1)"/>
<rect x="1396.2" y="211.8" width="3.9" height="5.8" transform="rotate(5 1398.2 214.7)"/>
<rect x="1402.1" y="227.3" width="4.1" height="5.3" transform="rotate(5 1404.1 229.9)"/>
<rect x="1403.4" y="212.4" width="4.0" height="4.9" transform="rotate(5 1405.4 214.9)"/>
<rect x="1408.8" y="228.2" width="4.9" height="4.9" transform="rotate(5 1411.3 230.7)"/>
<rect x="1409.5" y="213.2" width="6.0" height="6.6" transform="rotate(5 1412.5 216.5)"/>
<rect x="1417.4" y="213.6" width="4.6" height="7.4" transform="rotate(5 1419.6 217.3)"/>
<rect x="1261.2" y="3.6" width="4.7" height="5.0" transform="rotate(73 1263.5 6.1)"/>
<rect x="1275.6" y="-0.9" width="4.1" height="5.6" transform="rotate(73 1277.6 1.9)"/>
<rect x="1277.5" y="1.7" width="5.3" height="5.9" transform="rotate(-10 1280.2 4.6)"/>
<rect x="1287.9" y="15.5" width="4.0" height="6.2" transform="rotate(-10 1289.9 18.6)"/>
<rect x="1284.3" y="0.6" width="5.9" height="5.7" transform="rotate(-10 1287.3 3.5)"/>
<rect x="1294.7" y="15.2" width="4.7" height="5.1" transform="rotate(-10 1297.1 17.8)"/>
<rect x="1291.6" y="-1.2" width="5.5" height="6.5" transform="rotate(-10 1294.3 2.0)"/>
<rect x="1301.5" y="13.6" width="5.2" height="5.8" transform="rotate(-10 1304.1 16.4)"/>
<rect x="1299.6" y="-1.6" width="3.8" height="5.7" transform="rotate(-10 1301.5 1.2)"/>
<rect x="1308.7" y="12.7" width="5.2" height="5.2" transform="rotate(-10 1311.2 15.3)"/>
<rect x="1306.0" y="-2.6" width="5.2" height="5.6" transform="rotate(-10 1308.6 0.2)"/>
<rect x="1358.6" y="12.8" width="4.1" height="6.4" transform="rotate(-82 1360.6 15.9)"/>
<rect x="1342.8" y="10.2" width="4.8" height="7.3" transform="rotate(-82 1345.3 13.9)"/>
<rect x="1343.8" y="3.2" width="5.6" height="7.2" transform="rotate(-82 1346.6 6.8)"/>
<rect x="1358.7" y="-1.5" width="5.0" height="6.0" transform="rotate(-82 1361.2 1.5)"/>
<rect x="1344.4" y="-3.9" width="5.2" height="6.9" transform="rotate(-82 1347.0 -0.4)"/>
<rect x="1025.4" y="14.8" width="6.0" height="5.0" transform="rotate(-17 1028.4 17.4)"/>
<rect x="1023.4" y="7.6" width="5.5" height="4.8" transform="rotate(-17 1026.1 10.0)"/>
<rect x="1033.4" y="12.5" width="3.7" height="5.2" transform="rotate(-17 1035.3 15.2)"/>
<rect x="1030.9" y="5.6" width="4.6" height="5.7" transform="rotate(-17 1033.2 8.5)"/>
<rect x="1040.0" y="10.5" width="4.3" height="5.1" transform="rotate(-17 1042.1 13.0)"/>
<rect x="1037.2" y="2.4" width="4.9" height="5.1" transform="rotate(-17 1039.6 4.9)"/>
<rect x="1047.0" y="8.6" width="4.1" height="4.8" transform="rotate(-17 1049.0 11.0)"/>
<rect x="1044.0" y="0.1" width="5.2" height="5.8" transform="rotate(-17 1046.6 3.0)"/>
<rect x="1025.3" y="30.4" width="6.0" height="5.5" transform="rotate(-16 1028.3 33.1)"/>
<rect x="1023.2" y="22.5" width="5.6" height="5.8" transform="rotate(-16 1026.1 25.4)"/>
<rect x="1033.4" y="28.2" width="3.9" height="6.9" transform="rotate(-16 1035.4 31.7)"/>
<rect x="1030.8" y="20.6" width="4.3" height="5.5" transform="rotate(-16 1033.0 23.4)"/>
<rect x="1040.2" y="27.3" width="4.1" height="4.4" transform="rotate(-16 1042.2 29.5)"/>
<rect x="1038.0" y="19.6" width="4.2" height="5.3" transform="rotate(-16 1040.2 22.3)"/>
<rect x="1046.5" y="24.3" width="5.2" height="6.4" transform="rotate(-16 1049.1 27.5)"/>
<rect x="1043.9" y="17.0" width="5.7" height="4.6" transform="rotate(-16 1046.8 19.3)"/>
<rect x="1031.1" y="66.2" width="5.6" height="4.8" transform="rotate(-16 1033.9 68.6)"/>
<rect x="1029.6" y="57.9" width="3.6" height="4.4" transform="rotate(-16 1031.4 60.1)"/>
<rect x="1038.6" y="63.8" width="4.2" height="4.7" transform="rotate(-16 1040.7 66.2)"/>
<rect x="1035.7" y="56.0" width="5.5" height="5.4" transform="rotate(-16 1038.5 58.7)"/>
<rect x="1044.9" y="62.1" width="5.6" height="4.9" transform="rotate(-16 1047.7 64.6)"/>
<rect x="1042.5" y="52.9" width="5.6" height="6.4" transform="rotate(-16 1045.3 56.1)"/>
<rect x="1051.7" y="59.9" width="5.7" height="5.0" transform="rotate(-16 1054.6 62.4)"/>
<rect x="1049.5" y="51.3" width="5.5" height="5.7" transform="rotate(-16 1052.2 54.2)"/>
<rect x="1034.3" y="97.1" width="4.3" height="5.1" transform="rotate(-18 1036.4 99.7)"/>
<rect x="1032.1" y="89.1" width="3.7" height="5.8" transform="rotate(-18 1034.0 92.0)"/>
<rect x="1040.8" y="94.4" width="4.8" height="6.0" transform="rotate(-18 1043.3 97.4)"/>
<rect x="1038.2" y="87.6" width="5.7" height="5.8" transform="rotate(-18 1041.1 90.5)"/>
<rect x="1047.4" y="92.7" width="5.7" height="5.5" transform="rotate(-18 1050.2 95.5)"/>
<rect x="1045.6" y="83.7" width="3.8" height="6.3" transform="rotate(-18 1047.5 86.9)"/>
<rect x="1033.6" y="117.0" width="5.1" height="6.4" transform="rotate(-17 1036.2 120.2)"/>
<rect x="1031.1" y="110.5" width="6.1" height="5.9" transform="rotate(-17 1034.2 113.5)"/>
<rect x="1041.6" y="116.2" width="3.7" height="6.6" transform="rotate(-17 1043.5 119.5)"/>
<rect x="1038.2" y="108.7" width="5.8" height="5.5" transform="rotate(-17 1041.1 111.4)"/>
<rect x="1047.4" y="114.3" width="5.5" height="5.0" transform="rotate(-17 1050.2 116.8)"/>
<rect x="1045.4" y="105.8" width="5.0" height="6.9" transform="rotate(-17 1047.9 109.2)"/>
<rect x="1054.9" y="112.3" width="4.6" height="5.9" transform="rotate(-17 1057.2 115.2)"/>
<rect x="1051.7" y="103.9" width="6.0" height="6.4" transform="rotate(-17 1054.8 107.0)"/>
<rect x="1061.7" y="109.7" width="4.4" height="5.3" transform="rotate(-17 1063.9 112.4)"/>
<rect x="1058.8" y="102.5" width="5.6" height="4.5" transform="rotate(-17 1061.6 104.8)"/>
<rect x="1034.1" y="143.0" width="5.0" height="4.5" transform="rotate(-18 1036.6 145.2)"/>
<rect x="1032.2" y="134.2" width="4.1" height="7.2" transform="rotate(-18 1034.2 137.8)"/>
<rect x="1040.6" y="139.2" width="5.6" height="7.1" transform="rotate(-18 1043.3 142.7)"/>
<rect x="1038.2" y="131.4" width="5.2" height="6.5" transform="rotate(-18 1040.8 134.7)"/>
<rect x="1048.2" y="137.4" width="4.1" height="6.4" transform="rotate(-18 1050.2 140.6)"/>
<rect x="1045.7" y="129.8" width="3.9" height="4.9" transform="rotate(-18 1047.6 132.3)"/>
<rect x="1051.8" y="127.1" width="5.2" height="5.5" transform="rotate(-18 1054.4 129.9)"/>
<rect x="1061.5" y="133.8" width="5.0" height="5.2" transform="rotate(-18 1064.0 136.4)"/>
<rect x="1059.3" y="125.6" width="4.4" height="5.7" transform="rotate(-18 1061.5 128.5)"/>
<rect x="1069.1" y="131.4" width="3.7" height="6.1" transform="rotate(-18 1070.9 134.5)"/>
<rect x="1052.2" y="149.9" width="5.9" height="5.7" transform="rotate(-18 1055.1 152.8)"/>
<rect x="1059.0" y="146.9" width="5.9" height="7.3" transform="rotate(-18 1062.0 150.6)"/>
<rect x="1069.4" y="152.9" width="3.9" height="6.3" transform="rotate(-18 1071.3 156.0)"/>
<rect x="1067.3" y="146.9" width="3.6" height="4.4" transform="rotate(-18 1069.1 149.1)"/>
<rect x="1075.0" y="151.1" width="6.0" height="4.7" transform="rotate(-18 1078.0 153.4)"/>
<rect x="1074.1" y="143.6" width="3.6" height="6.6" transform="rotate(-18 1075.9 146.9)"/>
<rect x="1083.1" y="149.9" width="4.1" height="4.6" transform="rotate(-18 1085.2 152.2)"/>
<rect x="1079.7" y="140.6" width="5.7" height="6.6" transform="rotate(-18 1082.5 143.9)"/>
<rect x="1087.0" y="138.1" width="4.8" height="7.2" transform="rotate(-18 1089.4 141.7)"/>
<rect x="1096.3" y="145.9" width="5.4" height="4.4" transform="rotate(-18 1099.0 148.1)"/>
<rect x="1103.6" y="163.5" width="3.8" height="5.3" transform="rotate(-18 1105.5 166.2)"/>
<rect x="1100.1" y="155.7" width="5.8" height="5.9" transform="rotate(-18 1103.0 158.6)"/>
<rect x="1090.5" y="36.2" width="4.7" height="6.4" transform="rotate(-12 1092.8 39.4)"/>
<rect x="1099.4" y="43.2" width="4.5" height="6.3" transform="rotate(-12 1101.7 46.3)"/>
<rect x="1097.6" y="34.8" width="4.6" height="6.8" transform="rotate(-12 1099.9 38.2)"/>
<rect x="1106.2" y="42.2" width="5.0" height="5.3" transform="rotate(-12 1108.7 44.8)"/>
<rect x="1112.9" y="40.5" width="5.7" height="5.4" transform="rotate(-12 1115.7 43.2)"/>
<rect x="1111.0" y="31.2" width="5.7" height="6.2" transform="rotate(-12 1113.8 34.3)"/>
<rect x="1105.0" y="14.7" width="5.8" height="5.5" transform="rotate(-17 1107.9 17.4)"/>
<rect x="1102.7" y="6.3" width="5.8" height="6.8" transform="rotate(-17 1105.6 9.7)"/>
<rect x="1112.5" y="11.9" width="4.3" height="5.7" transform="rotate(-17 1114.6 14.7)"/>
<rect x="1109.5" y="5.1" width="5.8" height="4.5" transform="rotate(-17 1112.4 7.3)"/>
<rect x="1119.0" y="10.8" width="5.8" height="6.1" transform="rotate(-17 1121.9 13.9)"/>
<rect x="1116.5" y="2.0" width="5.6" height="6.5" transform="rotate(-17 1119.3 5.2)"/>
<rect x="1095.0" y="85.0" width="3.8" height="6.1" transform="rotate(63 1096.9 88.0)"/>
<rect x="1100.7" y="81.1" width="5.5" height="7.2" transform="rotate(63 1103.4 84.7)"/>
<rect x="1097.1" y="91.7" width="5.3" height="5.8" transform="rotate(63 1099.7 94.6)"/>
<rect x="1104.0" y="87.7" width="5.5" height="6.8" transform="rotate(63 1106.7 91.1)"/>
<rect x="1100.9" y="97.3" width="5.6" height="6.7" transform="rotate(63 1103.7 100.7)"/>
<rect x="1107.5" y="93.8" width="5.8" height="7.1" transform="rotate(63 1110.4 97.3)"/>
<rect x="1103.8" y="104.9" width="5.1" height="5.0" transform="rotate(63 1106.4 107.4)"/>
<rect x="1110.4" y="101.3" width="5.4" height="5.5" transform="rotate(63 1113.0 104.1)"/>
<rect x="1118.2" y="101.5" width="4.9" height="4.8" transform="rotate(63 1120.7 103.9)"/>
<rect x="1122.0" y="107.2" width="3.9" height="6.3" transform="rotate(63 1123.9 110.4)"/>
<rect x="1127.9" y="104.4" width="5.1" height="5.4" transform="rotate(63 1130.4 107.1)"/>
<rect x="1151.0" y="97.0" width="3.7" height="7.4" transform="rotate(-23 1152.8 100.7)"/>
<rect x="1147.5" y="91.5" width="5.0" height="5.2" transform="rotate(-23 1150.0 94.1)"/>
<rect x="1156.7" y="95.1" width="6.0" height="6.7" transform="rotate(-23 1159.7 98.5)"/>
<rect x="1154.2" y="88.3" width="4.2" height="4.5" transform="rotate(-23 1156.3 90.5)"/>
<rect x="1164.3" y="93.0" width="3.8" height="4.6" transform="rotate(-23 1166.2 95.3)"/>
<rect x="1160.6" y="84.2" width="4.7" height="7.2" transform="rotate(-23 1163.0 87.8)"/>
<rect x="1170.2" y="89.5" width="5.1" height="5.6" transform="rotate(-23 1172.7 92.2)"/>
<rect x="1176.9" y="86.5" width="5.0" height="6.3" transform="rotate(-23 1179.4 89.7)"/>
<rect x="1174.1" y="79.6" width="4.6" height="5.7" transform="rotate(-23 1176.3 82.5)"/>
<rect x="1183.5" y="85.4" width="6.1" height="5.1" transform="rotate(-23 1186.5 87.9)"/>
<rect x="1189.8" y="80.6" width="5.9" height="7.1" transform="rotate(-23 1192.7 84.2)"/>
<rect x="1187.2" y="74.4" width="5.6" height="6.5" transform="rotate(-23 1190.0 77.7)"/>
<rect x="1185.9" y="47.1" width="3.7" height="4.8" transform="rotate(-21 1187.8 49.5)"/>
<rect x="1181.8" y="38.0" width="5.3" height="5.3" transform="rotate(-21 1184.5 40.6)"/>
<rect x="1192.5" y="44.0" width="3.9" height="5.4" transform="rotate(-21 1194.4 46.6)"/>
<rect x="1189.3" y="36.9" width="4.8" height="4.9" transform="rotate(-21 1191.7 39.3)"/>
<rect x="1198.2" y="41.0" width="5.3" height="4.4" transform="rotate(-21 1200.8 43.2)"/>
<rect x="1196.5" y="33.1" width="3.7" height="7.2" transform="rotate(-21 1198.4 36.7)"/>
<rect x="1205.1" y="38.3" width="5.8" height="7.1" transform="rotate(-21 1208.0 41.9)"/>
<rect x="1203.1" y="30.2" width="3.8" height="7.2" transform="rotate(-21 1205.0 33.8)"/>
<rect x="1212.2" y="36.2" width="4.7" height="5.4" transform="rotate(-21 1214.6 38.9)"/>
<rect x="1209.1" y="28.8" width="5.2" height="4.8" transform="rotate(-21 1211.7 31.2)"/>
<rect x="1195.2" y="13.6" width="5.4" height="6.1" transform="rotate(-18 1197.9 16.6)"/>
<rect x="1193.3" y="6.3" width="4.3" height="5.6" transform="rotate(-18 1195.4 9.1)"/>
<rect x="1202.0" y="12.0" width="5.7" height="5.4" transform="rotate(-18 1204.8 14.7)"/>
<rect x="1200.2" y="3.9" width="4.4" height="7.1" transform="rotate(-18 1202.4 7.4)"/>
<rect x="1206.5" y="2.6" width="5.8" height="6.4" transform="rotate(-18 1209.5 5.8)"/>
<rect x="1216.4" y="7.8" width="4.3" height="5.2" transform="rotate(-18 1218.6 10.4)"/>
<rect x="1213.1" y="-0.6" width="6.1" height="7.4" transform="rotate(-18 1216.1 3.1)"/>
<rect x="1232.0" y="19.3" width="4.3" height="7.1" transform="rotate(-50 1234.2 22.8)"/>
<rect x="1236.0" y="15.3" width="6.0" height="4.4" transform="rotate(-50 1239.0 17.5)"/>
<rect x="1231.4" y="10.5" width="4.0" height="4.4" transform="rotate(-50 1233.3 12.7)"/>
<rect x="1240.6" y="15.3" width="4.1" height="5.7" transform="rotate(-45 1242.7 18.1)"/>
<rect x="1234.8" y="10.4" width="5.0" height="4.8" transform="rotate(-45 1237.3 12.8)"/>
<rect x="1245.3" y="10.8" width="5.4" height="5.0" transform="rotate(-45 1248.0 13.3)"/>
<rect x="1283.6" y="12.6" width="4.3" height="5.0" transform="rotate(-13 1285.8 15.1)"/>
<rect x="1291.8" y="18.6" width="5.6" height="6.1" transform="rotate(-13 1294.6 21.7)"/>
<rect x="1290.2" y="11.4" width="5.4" height="5.6" transform="rotate(-13 1292.9 14.2)"/>
<rect x="1298.6" y="16.4" width="5.6" height="5.4" transform="rotate(-13 1301.4 19.1)"/>
<rect x="1297.3" y="9.2" width="4.8" height="4.4" transform="rotate(-13 1299.7 11.4)"/>
<rect x="1325.7" y="14.2" width="5.8" height="5.2" transform="rotate(-7 1328.6 16.8)"/>
<rect x="1325.2" y="5.9" width="4.5" height="4.9" transform="rotate(-7 1327.5 8.3)"/>
<rect x="1333.9" y="13.1" width="3.6" height="6.0" transform="rotate(-7 1335.7 16.1)"/>
<rect x="1332.8" y="4.7" width="3.9" height="6.5" transform="rotate(-7 1334.7 7.9)"/>
<rect x="1340.7" y="12.3" width="4.4" height="6.5" transform="rotate(-7 1342.9 15.6)"/>
<rect x="1339.9" y="3.2" width="3.8" height="7.0" transform="rotate(-7 1341.8 6.7)"/>
<rect x="1367.8" y="12.5" width="4.9" height="6.0" transform="rotate(-16 1370.2 15.5)"/>
<rect x="1365.3" y="6.0" width="6.0" height="5.1" transform="rotate(-16 1368.3 8.6)"/>
<rect x="1374.9" y="9.5" width="4.2" height="6.9" transform="rotate(-16 1377.0 12.9)"/>
<rect x="1403.1" y="11.0" width="3.6" height="6.2" transform="rotate(-27 1405.0 14.1)"/>
<rect x="1412.1" y="15.3" width="5.4" height="4.7" transform="rotate(-27 1414.8 17.7)"/>
<rect x="1409.2" y="7.8" width="3.7" height="4.8" transform="rotate(-27 1411.0 10.2)"/>
<rect x="1326.4" y="38.5" width="4.3" height="4.8" transform="rotate(-7 1328.6 40.9)"/>
<rect x="1325.1" y="30.1" width="5.1" height="7.0" transform="rotate(-7 1327.6 33.5)"/>
<rect x="1333.0" y="37.7" width="5.5" height="4.9" transform="rotate(-7 1335.7 40.1)"/>
<rect x="1332.3" y="28.5" width="4.6" height="5.7" transform="rotate(-7 1334.6 31.4)"/>
<rect x="1340.6" y="35.5" width="4.6" height="7.2" transform="rotate(-7 1342.9 39.2)"/>
<rect x="1339.8" y="28.7" width="4.2" height="5.4" transform="rotate(-7 1341.9 31.4)"/>
<rect x="1412.2" y="44.4" width="5.6" height="7.1" transform="rotate(-11 1415.0 48.0)"/>
<rect x="1411.3" y="35.8" width="3.7" height="6.0" transform="rotate(-11 1413.2 38.8)"/>
<rect x="1390.4" y="85.3" width="4.2" height="5.7" transform="rotate(60 1392.5 88.1)"/>
<rect x="1397.4" y="81.6" width="4.9" height="4.6" transform="rotate(60 1399.9 83.9)"/>
<rect x="1394.9" y="91.6" width="3.7" height="4.8" transform="rotate(60 1396.7 94.0)"/>
<rect x="1401.1" y="86.7" width="5.9" height="6.3" transform="rotate(60 1404.0 89.8)"/>
<rect x="1396.8" y="98.3" width="5.8" height="4.5" transform="rotate(60 1399.7 100.6)"/>
<rect x="1404.3" y="93.9" width="5.3" height="5.2" transform="rotate(60 1406.9 96.5)"/>
<rect x="1384.9" y="127.9" width="5.2" height="5.2" transform="rotate(-12 1387.5 130.4)"/>
<rect x="1382.7" y="119.4" width="6.0" height="5.3" transform="rotate(-12 1385.7 122.0)"/>
<rect x="1392.5" y="125.4" width="3.9" height="6.2" transform="rotate(-12 1394.4 128.5)"/>
<rect x="1390.6" y="117.6" width="4.3" height="5.8" transform="rotate(-12 1392.7 120.5)"/>
<rect x="1399.3" y="123.9" width="3.9" height="4.8" transform="rotate(-12 1401.3 126.3)"/>
<rect x="1397.7" y="116.6" width="4.3" height="5.1" transform="rotate(-12 1399.8 119.2)"/>
<rect x="1404.2" y="114.0" width="5.1" height="6.1" transform="rotate(-12 1406.7 117.0)"/>
<rect x="1412.7" y="120.5" width="5.4" height="5.8" transform="rotate(-12 1415.4 123.4)"/>
<rect x="1411.5" y="113.2" width="4.8" height="5.3" transform="rotate(-12 1413.8 115.9)"/>
<rect x="1381.4" y="160.8" width="4.9" height="5.5" transform="rotate(-13 1383.8 163.6)"/>
<rect x="1380.1" y="153.5" width="4.5" height="7.0" transform="rotate(-13 1382.3 157.0)"/>
<rect x="1388.5" y="159.9" width="4.8" height="5.3" transform="rotate(-13 1391.0 162.5)"/>
<rect x="1386.4" y="152.5" width="5.5" height="4.9" transform="rotate(-13 1389.2 154.9)"/>
<rect x="1394.3" y="150.3" width="3.8" height="5.6" transform="rotate(-13 1396.2 153.1)"/>
<rect x="1403.1" y="157.0" width="3.9" height="5.1" transform="rotate(-13 1405.1 159.5)"/>
<rect x="1401.1" y="148.3" width="4.0" height="5.4" transform="rotate(-13 1403.1 151.0)"/>
<rect x="1409.5" y="154.4" width="5.1" height="6.9" transform="rotate(-13 1412.1 157.8)"/>
<rect x="1407.5" y="146.4" width="5.4" height="6.6" transform="rotate(-13 1410.2 149.7)"/>
<rect x="1381.0" y="186.9" width="5.6" height="6.5" transform="rotate(-11 1383.8 190.1)"/>
<rect x="1379.6" y="180.7" width="5.8" height="4.4" transform="rotate(-11 1382.4 182.9)"/>
<rect x="1388.5" y="185.3" width="4.8" height="7.3" transform="rotate(-11 1390.9 188.9)"/>
<rect x="1386.6" y="177.6" width="5.6" height="7.0" transform="rotate(-11 1389.4 181.1)"/>
<rect x="1395.6" y="184.4" width="4.7" height="5.8" transform="rotate(-11 1397.9 187.3)"/>
<rect x="1394.2" y="176.9" width="4.6" height="6.1" transform="rotate(-11 1396.5 179.9)"/>
<rect x="1402.2" y="182.3" width="5.6" height="6.9" transform="rotate(-11 1405.0 185.8)"/>
<rect x="1401.5" y="175.7" width="4.1" height="5.3" transform="rotate(-11 1403.6 178.3)"/>
<rect x="1409.6" y="182.5" width="5.1" height="4.7" transform="rotate(-11 1412.1 184.8)"/>
<rect x="1407.8" y="173.7" width="5.7" height="6.9" transform="rotate(-11 1410.7 177.1)"/>
<rect x="1384.0" y="210.6" width="4.7" height="7.1" transform="rotate(5 1386.3 214.2)"/>
<rect x="1391.2" y="203.9" width="5.9" height="6.7" transform="rotate(5 1394.1 207.3)"/>
<rect x="1398.1" y="213.7" width="4.9" height="6.0" transform="rotate(5 1400.6 216.7)"/>
<rect x="1399.1" y="205.0" width="4.5" height="6.2" transform="rotate(5 1401.3 208.1)"/>
<rect x="1405.1" y="214.2" width="5.3" height="6.0" transform="rotate(5 1407.8 217.2)"/>
<rect x="1412.5" y="213.8" width="5.0" height="6.1" transform="rotate(5 1415.0 216.9)"/>
<rect x="1413.3" y="205.5" width="4.8" height="5.7" transform="rotate(5 1415.7 208.4)"/>
<rect x="1365.0" y="50.5" width="4.5" height="6.0" transform="rotate(45 1367.3 53.5)"/>
<rect x="1370.9" y="44.0" width="4.4" height="7.3" transform="rotate(45 1373.1 47.7)"/>
<rect x="1371.0" y="54.5" width="3.9" height="7.1" transform="rotate(45 1372.9 58.1)"/>
<rect x="1375.9" y="48.5" width="6.1" height="7.1" transform="rotate(45 1378.9 52.0)"/>
<rect x="1376.2" y="59.8" width="4.3" height="5.9" transform="rotate(45 1378.4 62.8)"/>
<rect x="1381.3" y="54.7" width="4.1" height="6.3" transform="rotate(45 1383.3 57.8)"/>
<rect x="1380.2" y="64.9" width="6.1" height="6.3" transform="rotate(45 1383.3 68.1)"/>
</g>
<polygon points="1141.9,53.0 1152.5,51.7 1153.8,63.6 1143.2,64.9" fill="#fbd2c4"/>
<polygon points="1185.7,25.2 1200.2,21.2 1202.9,33.1 1189.6,34.5" fill="#fbd2c4"/>
<polygon points="1139.3,-1.3 1181.7,-1.3 1179.0,10.6 1163.1,15.9 1173.7,45.1 1169.7,47.7 1156.5,18.6 1144.6,37.1 1137.9,34.5 1148.5,13.3" fill="#dba4a4" stroke="#c98a8a" stroke-width=".8"/>
<circle cx="1136.6" cy="14.6" r="5.3" fill="none" stroke="#f0a050" stroke-width="1.6"/>
<circle cx="1200.2" cy="11.9" r="5.8" fill="none" stroke="#f0a050" stroke-width="1.6"/>
<circle cx="1147.2" cy="39.8" r="3.2" fill="none" stroke="#f0a050" stroke-width="1.6"/>
<polyline points="1020.0,71.0 1069.0,61.0" fill="none" stroke="#f0a050" stroke-width="2.6"/><polyline points="1020.0,71.0 1069.0,61.0" fill="none" stroke="#fff" stroke-width=".9"/>
<polyline points="1221.4,76.9 1240.0,88.8" fill="none" stroke="#f0a050" stroke-width="2.6"/><polyline points="1221.4,76.9 1240.0,88.8" fill="none" stroke="#fff" stroke-width=".9"/>
<polyline points="1377.3,80.9 1406.6,72.3" fill="none" stroke="#f0a050" stroke-width="2.6"/><polyline points="1377.3,80.9 1406.6,72.3" fill="none" stroke="#fff" stroke-width=".9"/>
<polyline points="1399.7,204.9 1423.8,209.0" fill="none" stroke="#f0a050" stroke-width="2.6"/><polyline points="1399.7,204.9 1423.8,209.0" fill="none" stroke="#fff" stroke-width=".9"/>
<polyline points="1179.0,10.6 1189.6,8.0" fill="none" stroke="#f0a050" stroke-width="2.6"/><polyline points="1179.0,10.6 1189.6,8.0" fill="none" stroke="#fff" stroke-width=".9"/>
<polyline points="1020.0,112.6 1073.0,98.1 1094.2,84.8" fill="none" stroke="#8f8f8f" stroke-width="1.2" stroke-dasharray="7 4"/>
<polyline points="1020.0,136.5 1073.0,121.9" fill="none" stroke="#8f8f8f" stroke-width="1.2" stroke-dasharray="7 4"/>
<polyline points="1030.6,-8.0 1059.8,39.8 1081.0,68.9 1099.5,100.7 1114.1,137.8 1115.4,153.7 1131.3,172.3 1157.8,188.2 1157.8,201.4" fill="none" stroke="#8e8e8e" stroke-width="4.3" stroke-linejoin="round"/>
<polyline points="1114.1,131.2 1157.8,116.6 1202.9,90.1 1221.4,74.2 1240.0,57.0 1220.7,68.9 1255.1,44.8 1272.3,34.4 1313.6,24.1 1351.5,22.4 1379.1,29.3 1392.8,41.3 1423.8,31.0" fill="none" stroke="#8e8e8e" stroke-width="4.3" stroke-linejoin="round"/>
<polyline points="1020.0,54.3 1059.8,39.8 1126.0,25.2 1128.7,37.1 1139.3,43.7" fill="none" stroke="#8e8e8e" stroke-width="4.3" stroke-linejoin="round"/>
<polyline points="1059.8,37.1 1075.7,18.6 1094.2,-2.7" fill="none" stroke="#8e8e8e" stroke-width="4.3" stroke-linejoin="round"/>
<polyline points="1081.0,68.9 1112.8,59.6 1131.3,53.0" fill="none" stroke="#8e8e8e" stroke-width="4.3" stroke-linejoin="round"/>
<polyline points="1116.7,59.6 1141.9,119.3" fill="none" stroke="#8e8e8e" stroke-width="4.3" stroke-linejoin="round"/>
<polyline points="1132.6,90.1 1202.9,59.6" fill="none" stroke="#8e8e8e" stroke-width="4.3" stroke-linejoin="round"/>
<polyline points="1020.0,83.5 1059.8,72.9 1081.0,68.9" fill="none" stroke="#8e8e8e" stroke-width="4.3" stroke-linejoin="round"/>
<polyline points="1059.8,80.8 1071.7,120.6 1083.6,132.5" fill="none" stroke="#8e8e8e" stroke-width="4.3" stroke-linejoin="round"/>
<polyline points="1020.0,155.0 1083.6,135.2 1104.8,119.3" fill="none" stroke="#8e8e8e" stroke-width="4.3" stroke-linejoin="round"/>
<polyline points="1033.3,87.5 1039.9,108.7" fill="none" stroke="#8e8e8e" stroke-width="4.3" stroke-linejoin="round"/>
<polyline points="1041.2,148.4 1047.8,167.0" fill="none" stroke="#8e8e8e" stroke-width="4.3" stroke-linejoin="round"/>
<polyline points="1083.6,137.8 1087.6,153.7" fill="none" stroke="#8e8e8e" stroke-width="4.3" stroke-linejoin="round"/>
<polyline points="1251.7,-3.4 1255.1,20.7 1272.3,34.4" fill="none" stroke="#8e8e8e" stroke-width="4.3" stroke-linejoin="round"/>
<polyline points="1313.6,-3.4 1313.6,24.1" fill="none" stroke="#8e8e8e" stroke-width="4.3" stroke-linejoin="round"/>
<polyline points="1392.8,-3.4 1379.1,29.3" fill="none" stroke="#8e8e8e" stroke-width="4.3" stroke-linejoin="round"/>
<polyline points="1392.8,41.3 1410.1,68.9 1413.5,99.9 1423.8,113.6" fill="none" stroke="#8e8e8e" stroke-width="4.3" stroke-linejoin="round"/>
<polyline points="1382.5,113.6 1406.6,111.9 1413.5,99.9" fill="none" stroke="#8e8e8e" stroke-width="4.3" stroke-linejoin="round"/>
<polyline points="1423.8,129.1 1406.6,136.0 1368.7,148.1 1365.3,179.1 1368.7,199.7 1377.3,197.0" fill="none" stroke="#8e8e8e" stroke-width="4.3" stroke-linejoin="round"/>
<polyline points="1365.3,179.1 1406.6,168.7 1423.8,170.5" fill="none" stroke="#8e8e8e" stroke-width="4.3" stroke-linejoin="round"/>
<polyline points="1375.6,220.4 1423.8,224.5" fill="none" stroke="#8e8e8e" stroke-width="4.3" stroke-linejoin="round"/>
<polyline points="1268.9,-3.4 1274.0,13.8 1313.6,6.9" fill="none" stroke="#8e8e8e" stroke-width="4.3" stroke-linejoin="round"/>
<polyline points="1351.5,22.4 1355.0,-3.4" fill="none" stroke="#8e8e8e" stroke-width="4.3" stroke-linejoin="round"/>
<polyline points="1030.6,-8.0 1059.8,39.8 1081.0,68.9 1099.5,100.7 1114.1,137.8 1115.4,153.7 1131.3,172.3 1157.8,188.2 1157.8,201.4" fill="none" stroke="#fdfdfd" stroke-width="2.7" stroke-linejoin="round"/>
<polyline points="1114.1,131.2 1157.8,116.6 1202.9,90.1 1221.4,74.2 1240.0,57.0 1220.7,68.9 1255.1,44.8 1272.3,34.4 1313.6,24.1 1351.5,22.4 1379.1,29.3 1392.8,41.3 1423.8,31.0" fill="none" stroke="#fdfdfd" stroke-width="2.7" stroke-linejoin="round"/>
<polyline points="1020.0,54.3 1059.8,39.8 1126.0,25.2 1128.7,37.1 1139.3,43.7" fill="none" stroke="#fdfdfd" stroke-width="2.7" stroke-linejoin="round"/>
<polyline points="1059.8,37.1 1075.7,18.6 1094.2,-2.7" fill="none" stroke="#fdfdfd" stroke-width="2.7" stroke-linejoin="round"/>
<polyline points="1081.0,68.9 1112.8,59.6 1131.3,53.0" fill="none" stroke="#fdfdfd" stroke-width="2.7" stroke-linejoin="round"/>
<polyline points="1116.7,59.6 1141.9,119.3" fill="none" stroke="#fdfdfd" stroke-width="2.7" stroke-linejoin="round"/>
<polyline points="1132.6,90.1 1202.9,59.6" fill="none" stroke="#fdfdfd" stroke-width="2.7" stroke-linejoin="round"/>
<polyline points="1020.0,83.5 1059.8,72.9 1081.0,68.9" fill="none" stroke="#fdfdfd" stroke-width="2.7" stroke-linejoin="round"/>
<polyline points="1059.8,80.8 1071.7,120.6 1083.6,132.5" fill="none" stroke="#fdfdfd" stroke-width="2.7" stroke-linejoin="round"/>
<polyline points="1020.0,155.0 1083.6,135.2 1104.8,119.3" fill="none" stroke="#fdfdfd" stroke-width="2.7" stroke-linejoin="round"/>
<polyline points="1033.3,87.5 1039.9,108.7" fill="none" stroke="#fdfdfd" stroke-width="2.7" stroke-linejoin="round"/>
<polyline points="1041.2,148.4 1047.8,167.0" fill="none" stroke="#fdfdfd" stroke-width="2.7" stroke-linejoin="round"/>
<polyline points="1083.6,137.8 1087.6,153.7" fill="none" stroke="#fdfdfd" stroke-width="2.7" stroke-linejoin="round"/>
<polyline points="1251.7,-3.4 1255.1,20.7 1272.3,34.4" fill="none" stroke="#fdfdfd" stroke-width="2.7" stroke-linejoin="round"/>
<polyline points="1313.6,-3.4 1313.6,24.1" fill="none" stroke="#fdfdfd" stroke-width="2.7" stroke-linejoin="round"/>
<polyline points="1392.8,-3.4 1379.1,29.3" fill="none" stroke="#fdfdfd" stroke-width="2.7" stroke-linejoin="round"/>
<polyline points="1392.8,41.3 1410.1,68.9 1413.5,99.9 1423.8,113.6" fill="none" stroke="#fdfdfd" stroke-width="2.7" stroke-linejoin="round"/>
<polyline points="1382.5,113.6 1406.6,111.9 1413.5,99.9" fill="none" stroke="#fdfdfd" stroke-width="2.7" stroke-linejoin="round"/>
<polyline points="1423.8,129.1 1406.6,136.0 1368.7,148.1 1365.3,179.1 1368.7,199.7 1377.3,197.0" fill="none" stroke="#fdfdfd" stroke-width="2.7" stroke-linejoin="round"/>
<polyline points="1365.3,179.1 1406.6,168.7 1423.8,170.5" fill="none" stroke="#fdfdfd" stroke-width="2.7" stroke-linejoin="round"/>
<polyline points="1375.6,220.4 1423.8,224.5" fill="none" stroke="#fdfdfd" stroke-width="2.7" stroke-linejoin="round"/>
<polyline points="1268.9,-3.4 1274.0,13.8 1313.6,6.9" fill="none" stroke="#fdfdfd" stroke-width="2.7" stroke-linejoin="round"/>
<polyline points="1351.5,22.4 1355.0,-3.4" fill="none" stroke="#fdfdfd" stroke-width="2.7" stroke-linejoin="round"/>
</g>
<polygon points="430.0,0.0 1024.0,0.0 1024.0,19.0 452.0,19.0 452.0,152.0 430.0,152.0" fill="#fefefe"/>
<clipPath id="tclip"><polygon points="430.0,0.0 1024.0,0.0 1024.0,19.0 452.0,19.0 452.0,152.0 430.0,152.0"/></clipPath><g clip-path="url(#tclip)">
<polyline points="483.5,0.8 491.1,19.2" fill="none" stroke="#f0a050" stroke-width="2.4" stroke-linejoin="round"/><polyline points="483.5,0.8 491.1,19.2" fill="none" stroke="#fff" stroke-width=".9" stroke-linejoin="round"/>
<polyline points="527.9,19.2 528.7,12.5 533.7,10.0 547.1,10.0 552.1,13.4 551.8,19.2" fill="none" stroke="#f0a050" stroke-width="2.4" stroke-linejoin="round"/><polyline points="527.9,19.2 528.7,12.5 533.7,10.0 547.1,10.0 552.1,13.4 551.8,19.2" fill="none" stroke="#fff" stroke-width=".9" stroke-linejoin="round"/>
<polyline points="573.9,0.0 582.6,19.2" fill="none" stroke="#f0a050" stroke-width="2.4" stroke-linejoin="round"/><polyline points="573.9,0.0 582.6,19.2" fill="none" stroke="#fff" stroke-width=".9" stroke-linejoin="round"/>
<polyline points="585.6,0.0 596.0,19.2" fill="none" stroke="#f0a050" stroke-width="2.4" stroke-linejoin="round"/><polyline points="585.6,0.0 596.0,19.2" fill="none" stroke="#fff" stroke-width=".9" stroke-linejoin="round"/>
<polyline points="607.3,19.2 659.2,1.3" fill="none" stroke="#f0a050" stroke-width="2.4" stroke-linejoin="round"/><polyline points="607.3,19.2 659.2,1.3" fill="none" stroke="#fff" stroke-width=".9" stroke-linejoin="round"/>
<polyline points="619.1,2.5 631.6,19.2" fill="none" stroke="#f0a050" stroke-width="2.4" stroke-linejoin="round"/><polyline points="619.1,2.5 631.6,19.2" fill="none" stroke="#fff" stroke-width=".9" stroke-linejoin="round"/>
<polyline points="619.9,3.3 655.9,1.3 662.6,12.5 637.5,19.2" fill="none" stroke="#f0a050" stroke-width="2.4" stroke-linejoin="round"/><polyline points="619.9,3.3 655.9,1.3 662.6,12.5 637.5,19.2" fill="none" stroke="#fff" stroke-width=".9" stroke-linejoin="round"/>
<rect x="561.6" y="10.8" width="2.600" height="1.800" fill="#fbc9b8" transform="rotate(-20 561.6 10.8)"/>
<rect x="511.6" y="15.7" width="2.600" height="1.800" fill="#fbc9b8" transform="rotate(-20 511.6 15.7)"/>
<rect x="566.3" y="5.6" width="2.600" height="1.800" fill="#fbc9b8" transform="rotate(-20 566.3 5.6)"/>
<rect x="730.2" y="9.5" width="2.600" height="1.800" fill="#fbc9b8" transform="rotate(-20 730.2 9.5)"/>
<rect x="694.8" y="9.6" width="2.600" height="1.800" fill="#fbc9b8" transform="rotate(-20 694.8 9.6)"/>
<rect x="677.4" y="11.6" width="2.600" height="1.800" fill="#fbc9b8" transform="rotate(-20 677.4 11.6)"/>
<rect x="701.2" y="9.6" width="2.600" height="1.800" fill="#fbc9b8" transform="rotate(-20 701.2 9.6)"/>
<rect x="668.6" y="16.4" width="2.600" height="1.800" fill="#fbc9b8" transform="rotate(-20 668.6 16.4)"/>
<rect x="667.5" y="17.1" width="2.600" height="1.800" fill="#fbc9b8" transform="rotate(-20 667.5 17.1)"/>
<rect x="607.6" y="17.3" width="2.600" height="1.800" fill="#fbc9b8" transform="rotate(-20 607.6 17.3)"/>
<rect x="704.2" y="3.3" width="2.600" height="1.800" fill="#fbc9b8" transform="rotate(-20 704.2 3.3)"/>
<rect x="538.9" y="5.3" width="2.600" height="1.800" fill="#fbc9b8" transform="rotate(-20 538.9 5.3)"/>
<rect x="723.5" y="9.0" width="2.600" height="1.800" fill="#fbc9b8" transform="rotate(-20 723.5 9.0)"/>
<rect x="699.2" y="18.3" width="2.600" height="1.800" fill="#fbc9b8" transform="rotate(-20 699.2 18.3)"/>
<rect x="700.1" y="17.8" width="2.600" height="1.800" fill="#fbc9b8" transform="rotate(-20 700.1 17.8)"/>
<rect x="709.9" y="11.2" width="2.600" height="1.800" fill="#fbc9b8" transform="rotate(-20 709.9 11.2)"/>
<rect x="667.5" y="5.2" width="2.600" height="1.800" fill="#fbc9b8" transform="rotate(-20 667.5 5.2)"/>
<rect x="693.7" y="11.3" width="2.600" height="1.800" fill="#fbc9b8" transform="rotate(-20 693.7 11.3)"/>
<rect x="572.0" y="2.7" width="2.600" height="1.800" fill="#fbc9b8" transform="rotate(-20 572.0 2.7)"/>
<rect x="698.7" y="18.2" width="2.600" height="1.800" fill="#fbc9b8" transform="rotate(-20 698.7 18.2)"/>
<rect x="528.3" y="15.1" width="2.600" height="1.800" fill="#fbc9b8" transform="rotate(-20 528.3 15.1)"/>
<rect x="600.0" y="4.2" width="2.600" height="1.800" fill="#fbc9b8" transform="rotate(-20 600.0 4.2)"/>
<rect x="702.8" y="2.4" width="2.600" height="1.800" fill="#fbc9b8" transform="rotate(-20 702.8 2.4)"/>
<rect x="668.5" y="7.2" width="2.600" height="1.800" fill="#fbc9b8" transform="rotate(-20 668.5 7.2)"/>
<rect x="704.7" y="18.1" width="2.600" height="1.800" fill="#fbc9b8" transform="rotate(-20 704.7 18.1)"/>
<rect x="552.6" y="8.5" width="2.600" height="1.800" fill="#fbc9b8" transform="rotate(-20 552.6 8.5)"/>
<rect x="518.1" y="16.2" width="2.600" height="1.800" fill="#fbc9b8" transform="rotate(-20 518.1 16.2)"/>
<rect x="708.2" y="8.0" width="2.600" height="1.800" fill="#fbc9b8" transform="rotate(-20 708.2 8.0)"/>
<rect x="611.1" y="10.4" width="2.600" height="1.800" fill="#fbc9b8" transform="rotate(-20 611.1 10.4)"/>
<rect x="717.9" y="10.2" width="2.600" height="1.800" fill="#fbc9b8" transform="rotate(-20 717.9 10.2)"/>
<rect x="604.6" y="13.7" width="2.600" height="1.800" fill="#fbc9b8" transform="rotate(-20 604.6 13.7)"/>
<rect x="561.5" y="6.7" width="2.600" height="1.800" fill="#fbc9b8" transform="rotate(-20 561.5 6.7)"/>
<rect x="726.2" y="10.4" width="2.600" height="1.800" fill="#fbc9b8" transform="rotate(-20 726.2 10.4)"/>
<rect x="601.0" y="11.4" width="2.600" height="1.800" fill="#fbc9b8" transform="rotate(-20 601.0 11.4)"/>
<rect x="513.1" y="12.0" width="2.600" height="1.800" fill="#fbc9b8" transform="rotate(-20 513.1 12.0)"/>
<rect x="665.9" y="14.0" width="2.600" height="1.800" fill="#fbc9b8" transform="rotate(-20 665.9 14.0)"/>
<rect x="513.6" y="2.7" width="2.600" height="1.800" fill="#fbc9b8" transform="rotate(-20 513.6 2.7)"/>
<rect x="564.5" y="9.3" width="2.600" height="1.800" fill="#fbc9b8" transform="rotate(-20 564.5 9.3)"/>
<rect x="901.0" y="1.3" width="4.200" height="3" fill="#fbcfc0" transform="rotate(-20 901.0 1.3)"/>
<rect x="823.7" y="4.7" width="4.200" height="3" fill="#fbcfc0" transform="rotate(-20 823.7 4.7)"/>
<rect x="906.3" y="5.0" width="4.200" height="3" fill="#fbcfc0" transform="rotate(-20 906.3 5.0)"/>
<rect x="803.2" y="8.5" width="4.200" height="3" fill="#fbcfc0" transform="rotate(-20 803.2 8.5)"/>
<rect x="888.6" y="2.6" width="4.200" height="3" fill="#fbcfc0" transform="rotate(-20 888.6 2.6)"/>
<rect x="825.7" y="6.7" width="4.200" height="3" fill="#fbcfc0" transform="rotate(-20 825.7 6.7)"/>
<rect x="911.3" y="8.5" width="4.200" height="3" fill="#fbcfc0" transform="rotate(-20 911.3 8.5)"/>
<rect x="915.0" y="3.8" width="4.200" height="3" fill="#fbcfc0" transform="rotate(-20 915.0 3.8)"/>
<rect x="828.2" y="12.3" width="4.200" height="3" fill="#fbcfc0" transform="rotate(-20 828.2 12.3)"/>
<rect x="919.9" y="8.8" width="4.200" height="3" fill="#fbcfc0" transform="rotate(-20 919.9 8.8)"/>
<rect x="906.8" y="15.6" width="4.200" height="3" fill="#fbcfc0" transform="rotate(-20 906.8 15.6)"/>
<rect x="802.5" y="5.7" width="4.200" height="3" fill="#fbcfc0" transform="rotate(-20 802.5 5.7)"/>
<rect x="906.9" y="12.1" width="4.200" height="3" fill="#fbcfc0" transform="rotate(-20 906.9 12.1)"/>
<rect x="906.7" y="6.9" width="4.200" height="3" fill="#fbcfc0" transform="rotate(-20 906.7 6.9)"/>
<rect x="793.5" y="6.0" width="4.200" height="3" fill="#fbcfc0" transform="rotate(-20 793.5 6.0)"/>
<rect x="904.6" y="5.6" width="4.200" height="3" fill="#fbcfc0" transform="rotate(-20 904.6 5.6)"/>
<rect x="829.8" y="8.2" width="4.200" height="3" fill="#fbcfc0" transform="rotate(-20 829.8 8.2)"/>
<rect x="925.9" y="3.6" width="4.200" height="3" fill="#fbcfc0" transform="rotate(-20 925.9 3.6)"/>
<rect x="772.6" y="17.4" width="4.200" height="3" fill="#fbcfc0" transform="rotate(-20 772.6 17.4)"/>
<rect x="919.1" y="18.2" width="4.200" height="3" fill="#fbcfc0" transform="rotate(-20 919.1 18.2)"/>
<rect x="927.0" y="4.7" width="4.200" height="3" fill="#fbcfc0" transform="rotate(-20 927.0 4.7)"/>
<rect x="896.6" y="15.5" width="4.200" height="3" fill="#fbcfc0" transform="rotate(-20 896.6 15.5)"/>
<rect x="882.8" y="10.0" width="4.200" height="3" fill="#fbcfc0" transform="rotate(-20 882.8 10.0)"/>
<rect x="907.4" y="1.6" width="4.200" height="3" fill="#fbcfc0" transform="rotate(-20 907.4 1.6)"/>
<rect x="923.0" y="13.0" width="4.200" height="3" fill="#fbcfc0" transform="rotate(-20 923.0 13.0)"/>
<rect x="926.4" y="16.6" width="4.200" height="3" fill="#fbcfc0" transform="rotate(-20 926.4 16.6)"/>
<rect x="922.3" y="11.0" width="4.200" height="3" fill="#fbcfc0" transform="rotate(-20 922.3 11.0)"/>
<rect x="774.0" y="13.9" width="4.200" height="3" fill="#fbcfc0" transform="rotate(-20 774.0 13.9)"/>
<rect x="800.6" y="6.1" width="4.200" height="3" fill="#fbcfc0" transform="rotate(-20 800.6 6.1)"/>
<rect x="882.7" y="10.1" width="4.200" height="3" fill="#fbcfc0" transform="rotate(-20 882.7 10.1)"/>
<rect x="874.2" y="6.8" width="4.200" height="3" fill="#fbcfc0" transform="rotate(-20 874.2 6.8)"/>
<rect x="851.7" y="14.6" width="4.200" height="3" fill="#fbcfc0" transform="rotate(-20 851.7 14.6)"/>
<rect x="830.7" y="4.3" width="4.200" height="3" fill="#fbcfc0" transform="rotate(-20 830.7 4.3)"/>
<rect x="800.5" y="14.7" width="4.200" height="3" fill="#fbcfc0" transform="rotate(-20 800.5 14.7)"/>
<rect x="926.0" y="15.0" width="4.200" height="3" fill="#fbcfc0" transform="rotate(-20 926.0 15.0)"/>
<rect x="909.6" y="1.0" width="4.200" height="3" fill="#fbcfc0" transform="rotate(-20 909.6 1.0)"/>
<rect x="877.0" y="16.0" width="4.200" height="3" fill="#fbcfc0" transform="rotate(-20 877.0 16.0)"/>
<rect x="780.2" y="5.6" width="4.200" height="3" fill="#fbcfc0" transform="rotate(-20 780.2 5.6)"/>
<rect x="901.7" y="0.9" width="4.200" height="3" fill="#fbcfc0" transform="rotate(-20 901.7 0.9)"/>
<rect x="781.0" y="3.1" width="4.200" height="3" fill="#fbcfc0" transform="rotate(-20 781.0 3.1)"/>
<rect x="792.7" y="2.0" width="4.200" height="3" fill="#fbcfc0" transform="rotate(-20 792.7 2.0)"/>
<rect x="934.9" y="15.8" width="4.200" height="3" fill="#fbcfc0" transform="rotate(-20 934.9 15.8)"/>
<rect x="786.2" y="9.7" width="4.200" height="3" fill="#fbcfc0" transform="rotate(-20 786.2 9.7)"/>
<rect x="824.7" y="6.4" width="4.200" height="3" fill="#fbcfc0" transform="rotate(-20 824.7 6.4)"/>
<rect x="830.6" y="12.2" width="4.200" height="3" fill="#fbcfc0" transform="rotate(-20 830.6 12.2)"/>
<rect x="803.8" y="6.6" width="4.200" height="3" fill="#fbcfc0" transform="rotate(-20 803.8 6.6)"/>
<rect x="792.5" y="10.6" width="4.200" height="3" fill="#fbcfc0" transform="rotate(-20 792.5 10.6)"/>
<rect x="891.6" y="7.5" width="4.200" height="3" fill="#fbcfc0" transform="rotate(-20 891.6 7.5)"/>
<rect x="785.2" y="4.0" width="4.200" height="3" fill="#fbcfc0" transform="rotate(-20 785.2 4.0)"/>
<rect x="834.3" y="11.5" width="4.200" height="3" fill="#fbcfc0" transform="rotate(-20 834.3 11.5)"/>
<rect x="902.8" y="7.5" width="4.200" height="3" fill="#fbcfc0" transform="rotate(-20 902.8 7.5)"/>
<rect x="905.9" y="11.8" width="4.200" height="3" fill="#fbcfc0" transform="rotate(-20 905.9 11.8)"/>
<rect x="854.8" y="13.2" width="4.200" height="3" fill="#fbcfc0" transform="rotate(-20 854.8 13.2)"/>
<rect x="848.9" y="5.1" width="4.200" height="3" fill="#fbcfc0" transform="rotate(-20 848.9 5.1)"/>
<polyline points="812.0,-0.8 817.8,19.2" fill="none" stroke="#9a9a9a" stroke-width="3.4"/><polyline points="812.0,-0.8 817.8,19.2" fill="none" stroke="#fff" stroke-width="1.800"/>
<polyline points="837.1,-0.8 846.3,19.2" fill="none" stroke="#9a9a9a" stroke-width="3.4"/><polyline points="837.1,-0.8 846.3,19.2" fill="none" stroke="#fff" stroke-width="1.800"/>
<polyline points="912.4,-0.8 914.0,6.7 925.8,19.2" fill="none" stroke="#9a9a9a" stroke-width="3.4"/><polyline points="912.4,-0.8 914.0,6.7 925.8,19.2" fill="none" stroke="#fff" stroke-width="1.800"/>
<polyline points="768.5,0.0 769.3,19.2" fill="none" stroke="#9a9a9a" stroke-width="3.4"/><polyline points="768.5,0.0 769.3,19.2" fill="none" stroke="#fff" stroke-width="1.800"/>
<polyline points="769.3,10.0 781.9,10.4" fill="none" stroke="#9a9a9a" stroke-width="3.4"/><polyline points="769.3,10.0 781.9,10.4" fill="none" stroke="#fff" stroke-width="1.800"/>
<polygon points="856.3,-0.8 870.5,-0.8 869.7,10.0 900.7,10.0 902.3,13.4 868.9,19.2 863.8,19.2" fill="#7cc6ea"/>
<polyline points="859.7,-0.8 866.4,19.2" fill="none" stroke="#c8a6d8" stroke-width="2"/>
<polygon points="932.4,0.0 955.9,0.0 964.2,15.9 947.5,11.7" fill="#f3e6dc" stroke="#b99a86" stroke-width=".8"/>
<polygon points="970.9,4.2 1021.1,4.2 1022.0,19.2 970.9,19.2" fill="#f0f5f1" stroke="#c9c9c9" stroke-width=".8"/>
<polygon points="989.3,0.8 1001.0,0.8 1001.0,3.0 989.3,3.0" fill="#e766f2"/>
<polygon points="430,0 492,0 430,30" fill="#ffffff"/>
<polygon points="430,0 437,0 430,3" fill="#f5ee3a"/>
<line x1="427" y1="9" x2="470" y2="-8" stroke="#9a9a9a" stroke-width="1"/>
<line x1="427" y1="14.5" x2="478" y2="-6" stroke="#f0545c" stroke-width="3.2"/>
<line x1="427" y1="20.5" x2="490" y2="-5" stroke="#9a9a9a" stroke-width="1"/>
<line x1="427" y1="25" x2="497" y2="-4" stroke="#f0545c" stroke-width="3.2"/>
<line x1="427" y1="30" x2="505" y2="-3" stroke="#9a9a9a" stroke-width="1"/>
<polygon points="455.1,6.7 480.2,1.7 486.9,19.2 450.1,19.2" fill="#f1f6f2"/>
<rect x="462" y="9" width="1.800" height="9" fill="#c9df9c"/><rect x="483" y="10" width="1.800" height="8" fill="#c9df9c"/>
<rect x="432" y="35" width="2.500" height="3.600" fill="#fbc9b8" transform="rotate(-20 432 35)"/>
<rect x="437" y="33" width="2.500" height="3.600" fill="#fbc9b8" transform="rotate(-20 437 33)"/>
<rect x="442" y="31" width="2.500" height="3.600" fill="#fbc9b8" transform="rotate(-20 442 31)"/>
<rect x="433" y="42" width="2.500" height="3.600" fill="#fbc9b8" transform="rotate(-20 433 42)"/>
<rect x="438" y="40" width="2.500" height="3.600" fill="#fbc9b8" transform="rotate(-20 438 40)"/>
<rect x="443" y="38" width="2.500" height="3.600" fill="#fbc9b8" transform="rotate(-20 443 38)"/>
<rect x="434" y="49" width="2.500" height="3.600" fill="#fbc9b8" transform="rotate(-20 434 49)"/>
<rect x="439" y="47" width="2.500" height="3.600" fill="#fbc9b8" transform="rotate(-20 439 47)"/>
<rect x="444" y="45" width="2.500" height="3.600" fill="#fbc9b8" transform="rotate(-20 444 45)"/>
<rect x="435" y="56" width="2.500" height="3.600" fill="#fbc9b8" transform="rotate(-20 435 56)"/>
<rect x="440" y="54" width="2.500" height="3.600" fill="#fbc9b8" transform="rotate(-20 440 54)"/>
<rect x="445" y="52" width="2.500" height="3.600" fill="#fbc9b8" transform="rotate(-20 445 52)"/>
<polyline points="428.0,66.0 452.0,55.0" fill="none" stroke="#9a9a9a" stroke-width="3.2"/><polyline points="428.0,66.0 452.0,55.0" fill="none" stroke="#fff" stroke-width="1.600"/>
<polyline points="430.0,70.0 452.0,118.0" fill="none" stroke="#9a9a9a" stroke-width="3.2"/><polyline points="430.0,70.0 452.0,118.0" fill="none" stroke="#fff" stroke-width="1.600"/>
<polyline points="436.0,68.0 452.0,100.0" fill="none" stroke="#9a9a9a" stroke-width="3.2"/><polyline points="436.0,68.0 452.0,100.0" fill="none" stroke="#fff" stroke-width="1.600"/>
<polyline points="432.0,75.0 445.0,72.0 452.0,90.0" fill="none" stroke="#f0a050" stroke-width="2.4" stroke-linejoin="round"/><polyline points="432.0,75.0 445.0,72.0 452.0,90.0" fill="none" stroke="#fff" stroke-width=".9" stroke-linejoin="round"/>
<polygon points="430,96 436,96 452,140 452,152 430,152" fill="#f1f6f2"/>
<polyline points="430,98 446,136 430,140" fill="none" stroke="#4daaf0" stroke-width="1"/>
</g>
<polygon points="1251.9,54.8 1272.8,37.9 1297.6,30.9 1305.6,57.8 1328.4,49.8 1343.3,85.6 1351.3,107.4 1362.2,108.4 1372.1,141.2 1329.4,155.1 1325.4,158.1 1301.6,157.1 1301.6,129.3 1285.7,105.4" fill="url(#cem)"/>
<polyline points="1272.8,39.9 1276.8,47.8 1292.7,82.6 1327.4,151.1 1367.2,139.2" fill="none" stroke="#f0a050" stroke-width="2.5" stroke-linejoin="round"/><polyline points="1272.8,39.9 1276.8,47.8 1292.7,82.6 1327.4,151.1 1367.2,139.2" fill="none" stroke="#fff7ea" stroke-width=".9" stroke-linejoin="round"/>
<polyline points="1259.9,59.7 1266.8,52.8 1293.6,41.9 1299.6,46.8 1306.6,65.7 1292.7,82.6" fill="none" stroke="#f0a050" stroke-width="2.5" stroke-linejoin="round"/><polyline points="1259.9,59.7 1266.8,52.8 1293.6,41.9 1299.6,46.8 1306.6,65.7 1292.7,82.6" fill="none" stroke="#fff7ea" stroke-width=".9" stroke-linejoin="round"/>
<polyline points="1259.9,59.7 1261.9,65.7 1282.7,96.5 1292.7,82.6" fill="none" stroke="#f0a050" stroke-width="2.5" stroke-linejoin="round"/><polyline points="1259.9,59.7 1261.9,65.7 1282.7,96.5 1292.7,82.6" fill="none" stroke="#fff7ea" stroke-width=".9" stroke-linejoin="round"/>
<polyline points="1274.8,80.6 1289.7,82.0" fill="none" stroke="#f0a050" stroke-width="2.5" stroke-linejoin="round"/><polyline points="1274.8,80.6 1289.7,82.0" fill="none" stroke="#fff7ea" stroke-width=".9" stroke-linejoin="round"/>
<polyline points="1282.7,96.5 1299.6,123.3" fill="none" stroke="#f0a050" stroke-width="2.5" stroke-linejoin="round"/><polyline points="1282.7,96.5 1299.6,123.3" fill="none" stroke="#fff7ea" stroke-width=".9" stroke-linejoin="round"/>
<polyline points="1316.5,79.6 1335.4,73.6" fill="none" stroke="#f0a050" stroke-width="2.5" stroke-linejoin="round"/><polyline points="1316.5,79.6 1335.4,73.6" fill="none" stroke="#fff7ea" stroke-width=".9" stroke-linejoin="round"/>
<polyline points="1327.4,151.1 1319.5,131.3 1351.3,122.3 1348.3,98.5" fill="none" stroke="#f0a050" stroke-width="2.5" stroke-linejoin="round"/><polyline points="1327.4,151.1 1319.5,131.3 1351.3,122.3 1348.3,98.5" fill="none" stroke="#fff7ea" stroke-width=".9" stroke-linejoin="round"/>
<polygon points="1308.5,57.8 1328.4,50.8 1343.3,85.6 1349.3,111.4 1323.4,117.4 1316.5,95.5" fill="none" stroke="#f0a050" stroke-width="2.5" stroke-linejoin="round"/><polygon points="1308.5,57.8 1328.4,50.8 1343.3,85.6 1349.3,111.4 1323.4,117.4 1316.5,95.5" fill="none" stroke="#fff7ea" stroke-width=".9" stroke-linejoin="round"/>
<circle cx="1292.7" cy="82.6" r="2.300" fill="#fffaf0" stroke="#f0a050" stroke-width="1"/>
<polygon points="1299.6,30.9 1319.5,26.0 1333.4,31.9 1363.2,29.9 1383.1,35.9 1387.0,45.8 1377.1,49.8 1351.3,41.9 1329.4,45.8 1308.5,53.8 1303.6,43.8" fill="#fbcfc0" opacity=".8"/>
<polygon points="1350.3,62.7 1363.2,58.7 1371.1,79.6 1357.2,84.6" fill="#fbcfc0"/>
<!--URBAN-->
<path d="M1024.0 246.4 L1044.2 240.4 L1074.5 282.8 L1151.3 260.6 L1151.3 280.8 L1127.0 317.1 L1177.5 331.3 L1183.6 305.8 L1262.3 317.1 L1294.6 274.7 L1333.6 299.1 L1310.2 340.4 L1342.9 325.0 L1360.1 361.1 L1332.6 373.1 L1337.7 393.8 L1289.6 426.5 L1291.3 438.5 L1129.0 482.7 L1125.8 478.7 L1110.9 466.6 L1102.8 420.1 L1028.1 397.9 L1032.1 387.8 L1007.9 387.8 L1000.0 388.0 L1000.0 453.0 L974.2 454.0 L964.2 486.3 L941.9 472.2 L929.8 470.2 L926.6 530.8 L923.8 585.3 L883.4 601.5 L875.3 597.4 L841.0 603.5 L782.4 583.3 L780.4 575.2 L826.8 528.8 L833.7 530.8 L838.9 516.6 L812.7 478.3 L756.2 488.4 L760.2 454.0 L760.0 300.0 L1000.0 300.0 L1000.0 246.0Z M1068.5 313.1 L1116.9 313.1 L1112.1 337.3 L1072.5 337.3Z M1139.1 321.2 L1129.0 361.6 L1171.5 373.7 L1171.5 397.9 L1100.8 399.9 L1096.7 369.6 L1116.9 321.2Z" fill="url(#hatch)" fill-rule="evenodd"/>
<polygon points="430,198 440,196 452,197 452,363 430,363" fill="url(#hatch)"/>
<polygon points="662.8,557.0 696.0,542.5 706.5,551.8 729.0,582.2 721.0,588.9 722.4,637.8 717.0,641.8 734.3,688.2 730.4,694.8 717.0,693.5 693.0,694.8 686.7,705.0 677.4,693.5 655.0,694.8 647.0,686.8 629.7,667.0 612.5,672.3 612.5,647.0 621.8,633.9 631.0,616.7 647.0,599.4 657.5,582.2 660.0,566.0" fill="url(#hatch)"/>
<polygon points="760.0,712.5 741.0,724.6 730.9,740.8 708.7,752.9 688.5,756.9 933.9,756.9 941.9,732.7 917.7,684.2 889.4,694.3 893.5,718.6 820.8,738.8 812.7,718.6 774.3,728.7 770.3,712.5 740.0,714.5" fill="url(#hatch)"/>
<polygon points="1227.3,728.7 1251.6,718.6 1267.7,724.6 1296.0,732.7 1300.0,756.9 1239.4,756.9" fill="url(#hatch)"/>
<polygon points="1374.0,636.0 1393.0,636.0 1398.0,655.0 1402.0,690.0 1409.0,701.0 1404.0,703.0 1385.0,703.0 1388.0,686.0 1375.0,650.0" fill="url(#hatch)"/>
<polygon points="1343.0,756.0 1346.0,733.0 1362.0,726.0 1362.0,742.0 1400.0,742.0 1400.0,735.0 1414.0,713.0 1421.0,711.0 1421.0,756.0" fill="url(#hatch)"/>
<polyline points="901.6,448.0 929.8,462.1 937.9,470.2 934.7,530.8 932.2,583.3 941.9,619.6 950.0,651.9 960.1,692.3 980.3,761.0" fill="none" stroke="#7fc4e8" stroke-width="8" stroke-linejoin="round" stroke-linecap="round"/>
<polygon points="944.0,651.9 952.0,654.0 956.1,676.2 937.9,668.1" fill="#62b7ea" stroke="#62b7ea" stroke-width="2" stroke-linejoin="round" filter="url(#soft)"/>
<polyline points="1020.0,247.2 1036.2,238.3 1052.3,226.2 1068.5,213.2 1092.7,198.7 1125.0,196.7 1157.3,193.1" fill="none" stroke="#74c0ea" stroke-width="2.6" stroke-linejoin="round" stroke-linecap="round"/>
<polyline points="1157.3,193.1 1189.6,197.9 1199.7,195.9 1221.9,181.7 1238.1,179.7 1262.3,193.9" fill="none" stroke="#74c0ea" stroke-width="2.1" stroke-linejoin="round" stroke-linecap="round"/>
<polyline points="1262.3,193.9 1294.6,206.0 1350.0,210.0" fill="none" stroke="#5ab2ee" stroke-width="1.3" stroke-linejoin="round" stroke-linecap="round"/>
<polyline points="1350.0,210.0 1383.5,216.1" fill="none" stroke="#4daaf0" stroke-width="1" stroke-linejoin="round" stroke-linecap="round"/>
<polyline points="1232.0,650.0 1253.9,684.0 1284.5,673.3 1305.0,665.4 1328.0,655.7 1344.8,652.5 1360.5,645.0 1374.4,640.0" fill="none" stroke="#74c0ea" stroke-width="1.8" stroke-linejoin="round" stroke-linecap="round"/>
<polyline points="474.4,478.3 494.6,520.7 478.5,528.8 496.6,557.0 488.6,585.3 486.5,595.4" fill="none" stroke="#4daaf0" stroke-width="1" stroke-linejoin="round" stroke-linecap="round"/>
<polyline points="494.6,520.7 563.3,490.4 589.5,479.1 644.1,502.5" fill="none" stroke="#4daaf0" stroke-width="1" stroke-linejoin="round" stroke-linecap="round"/>
<polyline points="478.5,528.8 533.0,530.8 571.4,512.6 579.4,522.7 644.1,504.5" fill="none" stroke="#4daaf0" stroke-width="1" stroke-linejoin="round" stroke-linecap="round"/>
<polyline points="533.0,530.8 539.0,551.0 496.6,557.0" fill="none" stroke="#4daaf0" stroke-width="1" stroke-linejoin="round" stroke-linecap="round"/>
<polyline points="555.2,522.7 569.3,540.9 599.6,534.8 601.6,553.0 654.2,546.9" fill="none" stroke="#4daaf0" stroke-width="1" stroke-linejoin="round" stroke-linecap="round"/>
<polyline points="569.3,540.9 555.2,617.6 561.3,629.7" fill="none" stroke="#4daaf0" stroke-width="1" stroke-linejoin="round" stroke-linecap="round"/>
<polyline points="430.0,593.4 486.5,596.2 494.6,599.4" fill="none" stroke="#4daaf0" stroke-width="1" stroke-linejoin="round" stroke-linecap="round"/>
<polyline points="526.9,651.9 541.1,692.3 514.8,694.3 520.9,708.5 537.0,718.6" fill="none" stroke="#4daaf0" stroke-width="1" stroke-linejoin="round" stroke-linecap="round"/>
<polyline points="478.5,686.3 500.7,754.9" fill="none" stroke="#4daaf0" stroke-width="1" stroke-linejoin="round" stroke-linecap="round"/>
<polyline points="587.5,454.0 589.5,479.1" fill="none" stroke="#4daaf0" stroke-width="1" stroke-linejoin="round" stroke-linecap="round"/>
<polyline points="686.5,466.2 694.5,536.8" fill="none" stroke="#4daaf0" stroke-width="1" stroke-linejoin="round" stroke-linecap="round"/>
<polyline points="486.5,468.2 474.4,478.3" fill="none" stroke="#4daaf0" stroke-width="1" stroke-linejoin="round" stroke-linecap="round"/>
<polyline points="486.5,468.2 587.5,454.0" fill="none" stroke="#4daaf0" stroke-width="1" stroke-linejoin="round" stroke-linecap="round"/>
<polyline points="946.0,474.2 964.2,486.3 1014.6,512.6 1057.0,508.6 1059.1,518.7 1075.2,520.7" fill="none" stroke="#4daaf0" stroke-width="1" stroke-linejoin="round" stroke-linecap="round"/>
<polyline points="1014.6,512.6 1016.7,488.4 1036.8,488.4 1038.9,450.0" fill="none" stroke="#4daaf0" stroke-width="1" stroke-linejoin="round" stroke-linecap="round"/>
<polyline points="946.0,526.7 990.4,544.9 998.5,536.8 998.5,530.8 992.4,528.8" fill="none" stroke="#4daaf0" stroke-width="1" stroke-linejoin="round" stroke-linecap="round"/>
<polyline points="944.0,528.8 946.0,555.0 986.4,565.1" fill="none" stroke="#4daaf0" stroke-width="1" stroke-linejoin="round" stroke-linecap="round"/>
<polyline points="1036.8,532.8 1075.2,530.8" fill="none" stroke="#4daaf0" stroke-width="1" stroke-linejoin="round" stroke-linecap="round"/>
<polyline points="1034.8,532.8 1036.8,557.0 990.4,563.1 986.4,583.3 978.3,591.4 984.3,623.7" fill="none" stroke="#4daaf0" stroke-width="1" stroke-linejoin="round" stroke-linecap="round"/>
<polyline points="984.3,623.7 1075.2,610.7" fill="none" stroke="#4daaf0" stroke-width="1" stroke-linejoin="round" stroke-linecap="round"/>
<polyline points="970.2,629.7 988.4,708.5" fill="none" stroke="#4daaf0" stroke-width="1" stroke-linejoin="round" stroke-linecap="round"/>
<polyline points="970.2,629.7 984.3,623.7" fill="none" stroke="#4daaf0" stroke-width="1" stroke-linejoin="round" stroke-linecap="round"/>
<polyline points="740.0,686.3 770.3,676.2 776.3,688.3 802.6,601.5" fill="none" stroke="#4daaf0" stroke-width="1" stroke-linejoin="round" stroke-linecap="round"/>
<polyline points="828.9,645.9 895.5,639.8" fill="none" stroke="#4daaf0" stroke-width="1" stroke-linejoin="round" stroke-linecap="round"/>
<polyline points="828.9,664.1 849.0,700.4 913.7,682.2" fill="none" stroke="#4daaf0" stroke-width="1" stroke-linejoin="round" stroke-linecap="round"/>
<polyline points="1169.4,222.2 1181.6,236.3 1183.6,260.6 1185.6,280.8 1183.6,305.8 1262.3,317.1 1278.5,301.0 1294.6,274.7" fill="none" stroke="#4daaf0" stroke-width="1" stroke-linejoin="round" stroke-linecap="round"/>
<polyline points="1181.6,236.3 1242.1,240.4 1262.3,232.3 1264.3,248.5 1278.5,268.7 1294.6,274.7" fill="none" stroke="#4daaf0" stroke-width="1" stroke-linejoin="round" stroke-linecap="round"/>
<polyline points="1028.1,397.9 1102.8,420.1" fill="none" stroke="#4daaf0" stroke-width="1" stroke-linejoin="round" stroke-linecap="round"/>
<polyline points="1020.0,410.0 1038.2,416.1 1040.2,450.4 1020.0,458.5" fill="none" stroke="#4daaf0" stroke-width="1" stroke-linejoin="round" stroke-linecap="round"/>
<polyline points="1129.0,482.7 1262.3,448.4 1261.5,482.7" fill="none" stroke="#4daaf0" stroke-width="1" stroke-linejoin="round" stroke-linecap="round"/>
<polyline points="1161.4,222.1 1169.4,234.2 1262.3,230.2 1306.8,234.2 1310.8,210.0" fill="none" stroke="#4daaf0" stroke-width="1" stroke-linejoin="round" stroke-linecap="round"/>
<polyline points="1306.8,234.2 1355.2,242.3" fill="none" stroke="#4daaf0" stroke-width="1" stroke-linejoin="round" stroke-linecap="round"/>
<polyline points="1263.8,228.6 1356.7,245.8 1401.4,254.4 1422.1,257.9" fill="none" stroke="#4daaf0" stroke-width="1" stroke-linejoin="round" stroke-linecap="round"/>
<polyline points="1263.8,228.6 1262.0,240.6 1275.8,264.7 1291.3,275.1" fill="none" stroke="#4daaf0" stroke-width="1" stroke-linejoin="round" stroke-linecap="round"/>
<polyline points="1356.7,245.8 1360.1,264.7 1368.7,283.7 1382.5,330.1 1360.1,350.8 1342.9,325.0 1348.1,299.1 1368.7,283.7" fill="none" stroke="#4daaf0" stroke-width="1" stroke-linejoin="round" stroke-linecap="round"/>
<polyline points="1403.1,366.2 1380.8,423.0 1375.6,447.1 1353.2,442.0 1339.5,398.9 1332.6,373.1" fill="none" stroke="#4daaf0" stroke-width="1" stroke-linejoin="round" stroke-linecap="round"/>
<polyline points="1403.1,366.2 1422.1,402.4" fill="none" stroke="#4daaf0" stroke-width="1" stroke-linejoin="round" stroke-linecap="round"/>
<polyline points="1375.6,447.1 1422.1,434.0" fill="none" stroke="#4daaf0" stroke-width="1" stroke-linejoin="round" stroke-linecap="round"/>
<polyline points="1375.6,447.1 1373.9,495.3" fill="none" stroke="#4daaf0" stroke-width="1" stroke-linejoin="round" stroke-linecap="round"/>
<polyline points="1260.3,450.6 1262.0,495.3" fill="none" stroke="#4daaf0" stroke-width="1" stroke-linejoin="round" stroke-linecap="round"/>
<polyline points="1263.7,502.5 1257.6,534.8 1267.7,579.2 1277.8,607.5 1231.4,647.9 1253.6,682.2 1348.5,647.9 1316.2,597.4 1384.8,571.2" fill="none" stroke="#4daaf0" stroke-width="1" stroke-linejoin="round" stroke-linecap="round"/>
<polyline points="1374.7,450.0 1380.8,510.6 1405.0,508.6 1420.0,474.2" fill="none" stroke="#4daaf0" stroke-width="1" stroke-linejoin="round" stroke-linecap="round"/>
<polyline points="1090.0,526.7 1170.8,492.4 1188.9,510.6 1263.7,502.5" fill="none" stroke="#4daaf0" stroke-width="1" stroke-linejoin="round" stroke-linecap="round"/>
<polyline points="1110.2,617.6 1170.8,585.3" fill="none" stroke="#4daaf0" stroke-width="1" stroke-linejoin="round" stroke-linecap="round"/>
<polyline points="1130.4,708.5 1223.3,656.0 1253.6,682.2" fill="none" stroke="#4daaf0" stroke-width="1" stroke-linejoin="round" stroke-linecap="round"/>
<polyline points="1126.3,708.5 1130.4,692.3 1223.3,656.0" fill="none" stroke="#4daaf0" stroke-width="1" stroke-linejoin="round" stroke-linecap="round"/>
<polyline points="1287.9,676.2 1291.9,716.6 1283.9,756.9" fill="none" stroke="#4daaf0" stroke-width="1" stroke-linejoin="round" stroke-linecap="round"/>
<polyline points="1328.3,716.6 1340.4,756.9" fill="none" stroke="#4daaf0" stroke-width="1" stroke-linejoin="round" stroke-linecap="round"/>
<polyline points="1090.0,728.7 1114.2,718.6" fill="none" stroke="#4daaf0" stroke-width="1" stroke-linejoin="round" stroke-linecap="round"/>
<polyline points="1034.7,532.1 1081.2,530.9" fill="none" stroke="#4daaf0" stroke-width="1" stroke-linejoin="round" stroke-linecap="round"/>
<polyline points="1129.6,482.4 1260.9,452.1 1262.9,496.5" fill="none" stroke="#4daaf0" stroke-width="1" stroke-linejoin="round" stroke-linecap="round"/>
<polyline points="1075.1,609.6 1093.3,603.6" fill="none" stroke="#4daaf0" stroke-width="1" stroke-linejoin="round" stroke-linecap="round"/>
<polyline points="1141.7,722.7 1250.8,684.3 1295.2,668.2" fill="none" stroke="#4daaf0" stroke-width="1" stroke-linejoin="round" stroke-linecap="round"/>
<polyline points="1299.9,127.4 1299.9,158.4 1327.4,160.1 1370.5,142.9 1361.8,110.2" fill="none" stroke="#4daaf0" stroke-width="1.1" stroke-linejoin="round" stroke-linecap="round"/>
<polyline points="1213.9,94.9 1278.5,137.3 1300.7,129.2" fill="none" stroke="#4daaf0" stroke-width="1.1" stroke-linejoin="round" stroke-linecap="round" stroke-dasharray="5 3"/>
<polyline points="1073.1,736.8 1121.6,714.6" fill="none" stroke="#4daaf0" stroke-width="1" stroke-linejoin="round" stroke-linecap="round" stroke-dasharray="6 3"/>
<polyline points="478.5,597.4 470.4,647.9" fill="none" stroke="#4daaf0" stroke-width="1" stroke-linejoin="round" stroke-linecap="round" stroke-dasharray="5 3"/>
<polyline points="460.3,647.9 438.1,692.3" fill="none" stroke="#4daaf0" stroke-width="1" stroke-linejoin="round" stroke-linecap="round" stroke-dasharray="5 3"/>
<ellipse cx="440.1" cy="486.3" rx="5" ry="2.5" fill="#62b7ea" transform="rotate(35 440.1 486.3)" filter="url(#soft)"/>
<ellipse cx="579.4" cy="494.4" rx="5" ry="2.5" fill="#62b7ea" transform="rotate(-15 579.4 494.4)" filter="url(#soft)"/>
<ellipse cx="456.3" cy="579.2" rx="8" ry="3" fill="#62b7ea" transform="rotate(5 456.3 579.2)" filter="url(#soft)"/>
<polyline points="433.2,601.5 434.8,639.8" fill="none" stroke="#62b7ea" stroke-width="3" stroke-linejoin="round" stroke-linecap="round"/>
<polyline points="438.9,601.5 440.5,639.8" fill="none" stroke="#62b7ea" stroke-width="3" stroke-linejoin="round" stroke-linecap="round"/>
<polyline points="445.3,601.5 447.0,639.8" fill="none" stroke="#62b7ea" stroke-width="3" stroke-linejoin="round" stroke-linecap="round"/>
<polyline points="430.0,643.9 450.2,639.8" fill="none" stroke="#62b7ea" stroke-width="2.5" stroke-linejoin="round" stroke-linecap="round"/>
<polyline points="432.0,670.1 442.1,674.2" fill="none" stroke="#62b7ea" stroke-width="3" stroke-linejoin="round" stroke-linecap="round"/>
<ellipse cx="541.1" cy="726.7" rx="3.5" ry="5" fill="#62b7ea" transform="rotate(-20 541.1 726.7)" filter="url(#soft)"/>
<ellipse cx="597.6" cy="728.7" rx="4" ry="3" fill="#62b7ea" transform="rotate(-20 597.6 728.7)" filter="url(#soft)"/>
<ellipse cx="611.7" cy="693.1" rx="3" ry="4" fill="#62b7ea" transform="rotate(-20 611.7 693.1)" filter="url(#soft)"/>
<polyline points="627.9,691.1 650.1,728.7" fill="none" stroke="#62b7ea" stroke-width="3" stroke-linejoin="round" stroke-linecap="round"/>
<polyline points="633.2,680.2 658.2,717.4" fill="none" stroke="#62b7ea" stroke-width="3" stroke-linejoin="round" stroke-linecap="round"/>
<polyline points="675.2,702.4 677.2,720.6" fill="none" stroke="#62b7ea" stroke-width="2.5" stroke-linejoin="round" stroke-linecap="round"/>
<polyline points="706.7,706.5 712.7,740.8" fill="none" stroke="#62b7ea" stroke-width="2.5" stroke-linejoin="round" stroke-linecap="round"/>
<ellipse cx="686.5" cy="701.2" rx="4" ry="5" fill="#62b7ea" transform="rotate(0 686.5 701.2)" filter="url(#soft)"/>
<polygon points="771.8,526.9 785.1,521.6 797.0,517.6 810.2,532.2 811.6,545.4 801.0,556.0 785.1,564.0 779.8,571.9 765.2,566.6 771.8,556.0 774.5,540.1" fill="url(#lake)" stroke="#8fcdf0" stroke-width="1.5" stroke-linejoin="round" filter="url(#soft)"/>
<ellipse cx="777.2" cy="511.4" rx="6" ry="5" fill="#62b7ea" transform="rotate(0 777.2 511.4)" filter="url(#soft)"/>
<polyline points="748.1,518.7 772.3,524.7 778.4,534.8" fill="none" stroke="#62b7ea" stroke-width="1.5" stroke-linejoin="round" stroke-linecap="round"/>
<polygon points="948.0,492.4 964.2,494.4 970.2,514.6 960.1,520.7 948.0,510.6" fill="#62b7ea" stroke="#62b7ea" stroke-width="2" stroke-linejoin="round" filter="url(#soft)"/>
<polyline points="825.6,631.7 826.8,664.1" fill="none" stroke="#62b7ea" stroke-width="5" stroke-linejoin="round" stroke-linecap="round"/>
<polyline points="800.6,697.2 832.9,686.3" fill="none" stroke="#62b7ea" stroke-width="4" stroke-linejoin="round" stroke-linecap="round"/>
<ellipse cx="882.6" cy="654.0" rx="8.500" ry="7" fill="#fdfdfd" stroke="#62b7ea" stroke-width="3"/>
<ellipse cx="905.6" cy="623.7" rx="5" ry="4.5" fill="#62b7ea" transform="rotate(0 905.6 623.7)" filter="url(#soft)"/>
<ellipse cx="962.1" cy="572.0" rx="17" ry="6" fill="#fdfdfd" stroke="#62b7ea" stroke-width="3" transform="rotate(10 962.1 572.0)"/>
<polygon points="992.4,577.2 1004.5,575.2 1014.6,591.4 1002.5,595.4 998.5,607.5 990.4,605.5" fill="#62b7ea" stroke="#62b7ea" stroke-width="2" stroke-linejoin="round" filter="url(#soft)"/>
<ellipse cx="1033.6" cy="646.7" rx="5" ry="5" fill="#62b7ea" transform="rotate(0 1033.6 646.7)" filter="url(#soft)"/>
<ellipse cx="966.2" cy="612.4" rx="2.5" ry="4" fill="#62b7ea" transform="rotate(0 966.2 612.4)" filter="url(#soft)"/>
<ellipse cx="993.6" cy="555.8" rx="6" ry="2.5" fill="#62b7ea" transform="rotate(10 993.6 555.8)" filter="url(#soft)"/>
<ellipse cx="1023.9" cy="531.2" rx="8" ry="2.5" fill="#62b7ea" transform="rotate(-5 1023.9 531.2)" filter="url(#soft)"/>
<ellipse cx="1066.3" cy="484.3" rx="5" ry="3.5" fill="#62b7ea" transform="rotate(0 1066.3 484.3)" filter="url(#soft)"/>
<ellipse cx="1224.0" cy="203.2" rx="5.5" ry="4" fill="#62b7ea" transform="rotate(20 1224.0 203.2)" filter="url(#soft)"/>
<ellipse cx="1192.5" cy="244.4" rx="6" ry="3.8" fill="#62b7ea" transform="rotate(10 1192.5 244.4)" filter="url(#soft)"/>
<ellipse cx="1160.5" cy="305.8" rx="4" ry="4" fill="#62b7ea" transform="rotate(0 1160.5 305.8)" filter="url(#soft)"/>
<polyline points="1068.5,418.1 1098.8,422.9" fill="none" stroke="#62b7ea" stroke-width="3.5" stroke-linejoin="round" stroke-linecap="round"/>
<ellipse cx="1068.5" cy="483.5" rx="6" ry="4" fill="#62b7ea" transform="rotate(-15 1068.5 483.5)" filter="url(#soft)"/>
<ellipse cx="1217.9" cy="463.3" rx="4" ry="2.5" fill="#62b7ea" transform="rotate(0 1217.9 463.3)" filter="url(#soft)"/>
<polyline points="1272.4,358.3 1310.8,367.6" fill="none" stroke="#6fbdec" stroke-width="4" stroke-linejoin="round" stroke-linecap="round"/>
<ellipse cx="1056.3" cy="186.6" rx="3" ry="5" fill="#62b7ea" transform="rotate(-25 1056.3 186.6)" filter="url(#soft)"/>
<ellipse cx="1224.8" cy="201.9" rx="5.5" ry="3.5" fill="#62b7ea" transform="rotate(10 1224.8 201.9)" filter="url(#soft)"/>
<polygon points="1246.0,86.6 1257.9,78.6 1268.8,91.5 1261.9,98.5" fill="#62b7ea" stroke="#62b7ea" stroke-width="2" stroke-linejoin="round" filter="url(#soft)"/>
<ellipse cx="1224.1" cy="202.5" rx="6" ry="4" fill="#62b7ea" transform="rotate(10 1224.1 202.5)" filter="url(#soft)"/>
<ellipse cx="1357.0" cy="657.0" rx="4" ry="6" fill="#62b7ea" transform="rotate(0 1357.0 657.0)" filter="url(#soft)"/>
<ellipse cx="1197.0" cy="501.7" rx="10" ry="4" fill="#62b7ea" transform="rotate(0 1197.0 501.7)" filter="url(#soft)"/>
<ellipse cx="1229.3" cy="494.4" rx="5" ry="4" fill="#62b7ea" transform="rotate(0 1229.3 494.4)" filter="url(#soft)"/>
<ellipse cx="1241.5" cy="493.6" rx="5" ry="3.5" fill="#62b7ea" transform="rotate(0 1241.5 493.6)" filter="url(#soft)"/>
<ellipse cx="1253.6" cy="490.4" rx="5" ry="4" fill="#62b7ea" transform="rotate(0 1253.6 490.4)" filter="url(#soft)"/>
<ellipse cx="1150.6" cy="536.0" rx="5" ry="5" fill="#62b7ea" transform="rotate(0 1150.6 536.0)" filter="url(#soft)"/>
<ellipse cx="1207.1" cy="567.1" rx="8" ry="6" fill="#62b7ea" transform="rotate(-20 1207.1 567.1)" filter="url(#soft)"/>
<ellipse cx="1180.9" cy="662.8" rx="4" ry="3" fill="#62b7ea" transform="rotate(0 1180.9 662.8)" filter="url(#soft)"/>
<ellipse cx="1225.3" cy="677.0" rx="3" ry="4" fill="#62b7ea" transform="rotate(0 1225.3 677.0)" filter="url(#soft)"/>
<ellipse cx="1178.9" cy="699.6" rx="3" ry="4" fill="#62b7ea" transform="rotate(0 1178.9 699.6)" filter="url(#soft)"/>
<ellipse cx="1207.1" cy="728.7" rx="4" ry="4" fill="#62b7ea" transform="rotate(0 1207.1 728.7)" filter="url(#soft)"/>
<ellipse cx="1186.9" cy="748.9" rx="5" ry="5" fill="#62b7ea" transform="rotate(0 1186.9 748.9)" filter="url(#soft)"/>
<polyline points="1201.1,514.6 1215.2,538.9" fill="none" stroke="#62b7ea" stroke-width="6" stroke-linejoin="round" stroke-linecap="round"/>
<polyline points="1229.3,512.6 1235.4,530.8" fill="none" stroke="#62b7ea" stroke-width="5" stroke-linejoin="round" stroke-linecap="round"/>
<polyline points="1245.5,508.6 1249.5,524.7" fill="none" stroke="#62b7ea" stroke-width="3" stroke-linejoin="round" stroke-linecap="round"/>
<polyline points="1176.8,587.3 1195.0,611.6 1207.1,627.7 1241.5,688.3" fill="none" stroke="#62b7ea" stroke-width="3" stroke-linejoin="round" stroke-linecap="round"/>
<polygon points="1180.9,593.4 1197.0,597.4 1199.0,611.6 1188.9,609.5" fill="#62b7ea" stroke="#62b7ea" stroke-width="2" stroke-linejoin="round" filter="url(#soft)"/>
<polyline points="1168.8,520.7 1182.9,522.7" fill="none" stroke="#62b7ea" stroke-width="2" stroke-linejoin="round" stroke-linecap="round"/>
<polyline points="1170.8,548.9 1178.9,557.0 1184.9,544.9" fill="none" stroke="#62b7ea" stroke-width="3" stroke-linejoin="round" stroke-linecap="round"/>
<polyline points="1199.0,627.7 1205.1,647.9" fill="none" stroke="#62b7ea" stroke-width="4" stroke-linejoin="round" stroke-linecap="round"/>
<ellipse cx="1258.3" cy="254.5" rx="19" ry="15" fill="none" stroke="#d9cfb5" stroke-width="1"/>
<ellipse cx="1398.0" cy="404.1" rx="14" ry="20" fill="none" stroke="#d9cfb5" stroke-width="1" transform="rotate(25 1398.0 404.1)"/>
<polyline points="553.2,522.7 599.6,514.6 644.1,506.5 656.2,530.8 654.2,546.9 569.3,553.0 553.2,522.7" fill="none" stroke="#d9cfb5" stroke-width="1" stroke-linejoin="round" stroke-linecap="round"/>
<polyline points="933.9,583.3 941.9,619.6 950.0,676.2 948.0,708.5" fill="none" stroke="#d9cfb5" stroke-width="1" stroke-linejoin="round" stroke-linecap="round"/>
<polyline points="1154.6,542.9 1170.8,502.5 1223.3,506.5 1259.6,488.4" fill="none" stroke="#d9cfb5" stroke-width="1" stroke-linejoin="round" stroke-linecap="round"/>
<polyline points="1154.6,542.9 1182.9,635.8 1184.9,700.4 1223.3,728.7" fill="none" stroke="#d9cfb5" stroke-width="1" stroke-linejoin="round" stroke-linecap="round"/>
<polyline points="1129.0,482.7 1292.6,442.3" fill="none" stroke="#5f6973" stroke-width="1.100" stroke-dasharray="5 2 1.500 2" opacity=".85"/>
<polyline points="1028.1,397.9 1102.8,420.1" fill="none" stroke="#5f6973" stroke-width="1.100" stroke-dasharray="5 2 1.500 2" opacity=".85"/>
<polygon points="1068.5,313.1 1116.9,313.1 1112.1,337.3 1072.5,337.3" fill="none" stroke="#5f6973" stroke-width="1.100" stroke-dasharray="5 2 1.500 2" opacity=".85"/>
<polyline points="1100.8,399.9 1171.5,397.9 1171.5,373.7 1129.0,361.6" fill="none" stroke="#5f6973" stroke-width="1.100" stroke-dasharray="5 2 1.500 2" opacity=".85"/>
<polyline points="1183.6,305.8 1262.3,317.1" fill="none" stroke="#5f6973" stroke-width="1.100" stroke-dasharray="5 2 1.500 2" opacity=".85"/>
<polyline points="1310.8,341.4 1333.0,296.9" fill="none" stroke="#5f6973" stroke-width="1.100" stroke-dasharray="5 2 1.500 2" opacity=".85"/>
<polyline points="756.2,488.4 812.7,478.3" fill="none" stroke="#5f6973" stroke-width="1.100" stroke-dasharray="5 2 1.500 2" opacity=".85"/>
<polyline points="883.4,601.5 923.8,585.3" fill="none" stroke="#5f6973" stroke-width="1.100" stroke-dasharray="5 2 1.500 2" opacity=".85"/>
<polyline points="774.3,728.7 812.7,718.6 820.8,738.8 893.5,718.6" fill="none" stroke="#5f6973" stroke-width="1.100" stroke-dasharray="5 2 1.500 2" opacity=".85"/>
<polyline points="740.0,686.3 770.3,676.2 776.3,688.3" fill="none" stroke="#5f6973" stroke-width="1.100" stroke-dasharray="5 2 1.500 2" opacity=".85"/>
<polyline points="802.6,601.5 776.3,688.3" fill="none" stroke="#5f6973" stroke-width="1.100" stroke-dasharray="5 2 1.500 2" opacity=".85"/>
<polyline points="849.0,700.4 913.7,682.2" fill="none" stroke="#5f6973" stroke-width="1.100" stroke-dasharray="5 2 1.500 2" opacity=".85"/>
<polyline points="932.9,470.2 929.7,530.8 927.2,583.3 936.9,619.6 945.0,651.9 955.1,692.3 975.3,761.0" fill="none" stroke="#5f6973" stroke-width="1.100" stroke-dasharray="5 2 1.500 2" opacity=".85"/>
<polyline points="943.4,470.2 940.2,530.8 937.7,583.3 947.4,619.6 955.5,651.9 965.6,692.3 985.8,761.0" fill="none" stroke="#5f6973" stroke-width="1.100" stroke-dasharray="5 2 1.500 2" opacity=".85"/>
<polyline points="613.8,674.2 644.1,670.1 654.2,695.6" fill="none" stroke="#5f6973" stroke-width="1.100" stroke-dasharray="5 2 1.500 2" opacity=".85"/>
<polyline points="593.6,686.3 603.7,724.6 631.9,728.7 656.2,738.8 672.3,724.6 688.5,728.7" fill="none" stroke="#5f6973" stroke-width="1.100" stroke-dasharray="5 2 1.500 2" opacity=".85"/>
<polyline points="664.2,557.0 682.4,546.1" fill="none" stroke="#5f6973" stroke-width="1.100" stroke-dasharray="5 2 1.500 2" opacity=".85"/>
<polyline points="732.9,694.3 760.0,686.3" fill="none" stroke="#5f6973" stroke-width="1.100" stroke-dasharray="5 2 1.500 2" opacity=".85"/>
<polyline points="982.3,583.3 984.3,623.7" fill="none" stroke="#5f6973" stroke-width="1.100" stroke-dasharray="5 2 1.500 2" opacity=".85"/>
<polyline points="970.2,629.7 988.4,708.5" fill="none" stroke="#5f6973" stroke-width="1.100" stroke-dasharray="5 2 1.500 2" opacity=".85"/>
<polyline points="1352.5,647.9 1348.5,676.2 1362.6,720.6" fill="none" stroke="#5f6973" stroke-width="1.100" stroke-dasharray="5 2 1.500 2" opacity=".85"/>
<polyline points="623.9,454.0 668.3,524.7" fill="none" stroke="#9a9a9a" stroke-width="3.6" stroke-linejoin="round" stroke-linecap="round"/>
<polyline points="623.9,454.0 668.3,524.7" fill="none" stroke="#ffffff" stroke-width="1.8" stroke-linejoin="round" stroke-linecap="round"/>
<polyline points="654.2,452.0 650.1,490.4 666.3,526.7 661.0,555.0 656.2,579.2 648.1,599.4 631.9,617.6 619.8,635.8 612.6,651.9 611.7,676.2 575.4,684.2 563.3,708.5 572.2,761.0" fill="none" stroke="#cdaedb" stroke-width="2.6" stroke-linejoin="round" stroke-linecap="round"/>
<polyline points="430.0,700.4 446.2,706.5 462.3,698.4 482.5,670.1 510.8,651.9 563.3,631.7 631.9,615.6" fill="none" stroke="#9a9a9a" stroke-width="4" stroke-linejoin="round" stroke-linecap="round"/>
<polyline points="430.0,700.4 446.2,706.5 462.3,698.4 482.5,670.1 510.8,651.9 563.3,631.7 631.9,615.6" fill="none" stroke="#ffffff" stroke-width="2.2" stroke-linejoin="round" stroke-linecap="round"/>
<polyline points="662.2,452.0 664.2,510.6 672.3,526.7 692.5,542.9 728.9,579.2 760.0,585.3 780.4,589.3 841.0,603.5 875.3,597.4 883.4,607.5 901.6,647.9 917.7,684.2 933.9,708.5 946.0,732.7 933.9,761.0" fill="none" stroke="#ee9a4d" stroke-width="3.6" stroke-linejoin="round" stroke-linecap="round"/>
<polyline points="662.2,452.0 664.2,510.6 672.3,526.7 692.5,542.9 728.9,579.2 760.0,585.3 780.4,589.3 841.0,603.5 875.3,597.4 883.4,607.5 901.6,647.9 917.7,684.2 933.9,708.5 946.0,732.7 933.9,761.0" fill="none" stroke="#fde3c3" stroke-width="1.6" stroke-linejoin="round" stroke-linecap="round"/>
<polyline points="946.0,732.7 970.2,724.6 1038.9,690.3 1075.2,681.0 1089.2,681.1" fill="none" stroke="#ee9a4d" stroke-width="3.6" stroke-linejoin="round" stroke-linecap="round"/>
<polyline points="946.0,732.7 970.2,724.6 1038.9,690.3 1075.2,681.0 1089.2,681.1" fill="none" stroke="#fde3c3" stroke-width="1.6" stroke-linejoin="round" stroke-linecap="round"/>
<polyline points="458.3,452.0 456.3,490.4 446.2,522.7 430.0,546.9" fill="none" stroke="#ee9a4d" stroke-width="3.6" stroke-linejoin="round" stroke-linecap="round"/>
<polyline points="458.3,452.0 456.3,490.4 446.2,522.7 430.0,546.9" fill="none" stroke="#fde3c3" stroke-width="1.6" stroke-linejoin="round" stroke-linecap="round"/>
<polyline points="565.3,631.7 573.4,668.1 573.4,680.2 565.3,688.3" fill="none" stroke="#ee9a4d" stroke-width="3" stroke-linejoin="round" stroke-linecap="round"/>
<polyline points="565.3,631.7 573.4,668.1 573.4,680.2 565.3,688.3" fill="none" stroke="#fde3c3" stroke-width="1" stroke-linejoin="round" stroke-linecap="round"/>
<polyline points="1114.1,137.8 1115.4,153.7 1131.3,172.3 1157.8,188.2 1159.1,201.4 1159.3,200.0 1157.3,252.5 1141.2,292.9 1118.9,321.2 1102.8,357.5 1098.8,393.9 1106.8,458.5 1110.9,478.7 1105.4,476.3 1085.2,506.6 1077.1,532.9 1077.1,561.2 1093.3,593.5 1107.4,621.7 1103.4,654.1 1093.3,678.3 1099.3,694.4 1121.6,714.6 1137.7,722.7 1147.8,755.0" fill="none" stroke="#9a9a9a" stroke-width="4" stroke-linejoin="round" stroke-linecap="round"/>
<polyline points="1114.1,137.8 1115.4,153.7 1131.3,172.3 1157.8,188.2 1159.1,201.4 1159.3,200.0 1157.3,252.5 1141.2,292.9 1118.9,321.2 1102.8,357.5 1098.8,393.9 1106.8,458.5 1110.9,478.7 1105.4,476.3 1085.2,506.6 1077.1,532.9 1077.1,561.2 1093.3,593.5 1107.4,621.7 1103.4,654.1 1093.3,678.3 1099.3,694.4 1121.6,714.6 1137.7,722.7 1147.8,755.0" fill="none" stroke="#ffffff" stroke-width="2.2" stroke-linejoin="round" stroke-linecap="round"/>
<polyline points="1267.7,581.3 1372.7,516.6 1388.9,510.6" fill="none" stroke="#a8a8a8" stroke-width="1.6" stroke-linejoin="round" stroke-linecap="round" stroke-dasharray="9 5"/>
<polyline points="1420.0,478.3 1409.1,498.5 1401.0,514.6" fill="none" stroke="#ee9a4d" stroke-width="3" stroke-linejoin="round" stroke-linecap="round"/>
<polyline points="1420.0,478.3 1409.1,498.5 1401.0,514.6" fill="none" stroke="#fde3c3" stroke-width="1" stroke-linejoin="round" stroke-linecap="round"/>
<polyline points="1405.0,508.6 1413.1,530.8" fill="none" stroke="#ee9a4d" stroke-width="3" stroke-linejoin="round" stroke-linecap="round"/>
<polyline points="1405.0,508.6 1413.1,530.8" fill="none" stroke="#fde3c3" stroke-width="1" stroke-linejoin="round" stroke-linecap="round"/>
<polygon points="533.0,697.2 551.2,692.3 563.3,694.3 563.3,716.6 539.0,714.5" fill="#fbcfc0"/>
<polygon points="1018.7,702.4 1042.9,694.3 1046.9,702.4 1032.8,708.5 1036.8,728.7 1028.8,730.7" fill="#fbcfc0"/>
<polygon points="1382.8,520.7 1390.9,518.7 1396.9,536.8 1386.8,540.9" fill="#fbcfc0"/><polygon points="1392.9,534.8 1405.0,530.8 1409.1,540.9 1396.9,546.9" fill="#fbcfc0"/><polygon points="1390.9,557.0 1401.0,553.0 1404.2,561.1 1393.7,565.1" fill="#fbcfc0"/>
<polygon points="1114.9,363.6 1139.1,365.6 1137.1,381.7 1116.9,381.7" fill="#fdfdfd" stroke="#e8b7ae" stroke-width="1"/>
<polygon points="1189.6,161.6 1197.7,163.6 1209.8,177.7 1203.8,183.8 1191.6,173.7" fill="#fbcfc0"/>
<polygon points="1110.2,472.2 1124.3,474.2 1124.3,480.3 1110.2,479.1" fill="#fbcfc0"/>
<polygon points="1091.3,579.3 1157.9,549.0 1174.1,581.4 1107.4,615.7" fill="none" stroke="#66707a" stroke-width="1.2" stroke-dasharray="5 2 1.5 2"/>
<polygon points="1174.1,581.4 1212.4,549.0 1188.2,510.7 1250.8,500.6 1260.9,549.0 1266.9,583.4 1238.7,607.6 1234.6,603.6 1206.4,623.8" fill="none" stroke="#66707a" stroke-width="1.2" stroke-dasharray="5 2 1.5 2"/>
<polygon points="1046.8,522.0 1079.1,522.0 1079.1,529.7 1046.8,529.7" fill="#fdfdfd" stroke="#c9c9c9" stroke-width=".6"/>
<polygon points="1050.9,524.0 1063.0,524.0 1063.0,526.8 1050.9,526.8" fill="#fbcfc0"/><polygon points="1067.0,524.8 1075.1,524.8 1075.1,527.2 1067.0,527.2" fill="#fbcfc0"/>
<g font-family="Liberation Sans, sans-serif" paint-order="stroke" stroke-linejoin="round">
<text x="1093.500" y="197" font-size="17" fill="#4aa9ea" stroke="#ffffff" stroke-width="2" textLength="97" transform="rotate(-3.500 1093.500 197)">Bommelzwin</text>
<text x="1254.500" y="671" font-size="17" fill="#4aa9ea" stroke="#ffffff" stroke-width="2" textLength="100" transform="rotate(-13.800 1254.500 671)">Duivekotader</text>
<text x="1222" y="78" font-size="13.500" font-weight="700" fill="#5f5f5f" stroke="#ffffff" stroke-width="2" textLength="76" lengthAdjust="spacingAndGlyphs" transform="rotate(-80 1222 78)">Rood-Kruis</text>
<text x="1068" y="27" font-size="14" font-weight="700" fill="#5f5f5f" stroke="#ffffff" stroke-width="2" transform="rotate(-43 1068 27)">Ouds</text>
<text x="677.500" y="13.500" font-size="15.500" font-weight="700" font-style="italic" fill="#606060" stroke="#ffffff" stroke-width="2" textLength="88" lengthAdjust="spacingAndGlyphs">Harendijke</text>
</g>
</svg></div>
<!-- LEFT PANEL -->
<div id="lpanel" class="abs">
 <div class="abs hdr"></div>
 <svg class="abs" style="left:333px;top:25px" width="12" height="12" viewBox="0 0 12 12" stroke="#4a4a4a" stroke-width="1.2" fill="none"><path d="M1 1l10 10M11 1L1 11"/></svg>
 <!-- notice card -->
 <div class="abs" style="left:20px;top:82px;width:329px;height:213px;background:#fff;border-left:3px solid #007ac2;box-shadow:0 3px 10px rgba(0,0,0,.10),0 1px 3px rgba(0,0,0,.05)"></div>
 <svg class="abs" style="left:324px;top:184px" width="10" height="10" viewBox="0 0 10 10" stroke="#4a4a4a" stroke-width="1.1" fill="none"><path d="M.5.5l9 9M9.500.5l-9 9"/></svg>
 <!-- layer list band -->
 <div class="abs" style="left:0;top:314px;width:370px;height:254px;background:#f1f1f1"></div>
 <div class="abs" style="left:12px;top:329px;width:346px;height:225px;background:#fff;border-bottom:1px solid #d4d4d4"></div>
 <div class="abs" style="left:33px;top:497px;width:3px;height:50px;background:#007ac2"></div>
 <!-- triangle -->
 <svg class="abs" style="left:23px;top:351px" width="16" height="11" viewBox="0 0 16 11" stroke="#4a4a4a" stroke-width="1.2" fill="none" stroke-linejoin="round"><path d="M1.200 1.200h13.200l-6.600 8.400z"/></svg>
 <!-- ellipses -->
 <svg class="abs" style="left:0;top:0" width="370" height="755" viewBox="60 0 370 755" fill="#4a4a4a">
  <circle cx="380" cy="356.400" r="1.500"/><circle cx="387.600" cy="356.400" r="1.500"/><circle cx="395.200" cy="356.400" r="1.500"/>
  <circle cx="377.300" cy="414.300" r="1.500"/><circle cx="384.900" cy="414.300" r="1.500"/><circle cx="392.500" cy="414.300" r="1.500"/>
  <circle cx="377.300" cy="468" r="1.500"/><circle cx="384.900" cy="468" r="1.500"/><circle cx="392.500" cy="468" r="1.500"/>
  <circle cx="377.300" cy="522" r="1.500"/><circle cx="384.900" cy="522" r="1.500"/><circle cx="392.500" cy="522" r="1.500"/>
  <g fill="none" stroke="#4a4a4a" stroke-width="1.100">
   <path d="M340.500 414.300c3-4.700 6.300-6.300 9.700-6.300s6.700 1.600 9.700 6.300c-3 4.700-6.300 6.300-9.700 6.300s-6.700-1.600-9.700-6.300z"/><circle cx="350.200" cy="414.300" r="3.600"/><path d="M355 406.500l-9.500 15.500"/>
   <path d="M340.500 468c3-4.700 6.300-6.300 9.700-6.300s6.700 1.600 9.700 6.300c-3 4.700-6.300 6.300-9.700 6.300s-6.700-1.600-9.700-6.300z"/><circle cx="350.200" cy="468" r="3.600"/><path d="M355 460.200l-9.500 15.500"/>
  </g>
 </svg>
 <!-- add button -->
 <div class="abs" style="left:88px;top:578px;width:194px;height:40px;background:#fff;border:1px solid #007ac2"></div>
 <div class="abs" style="left:241px;top:578px;width:1px;height:40px;background:#007ac2"></div>
 <svg class="abs" style="left:101px;top:588px" width="22" height="21" viewBox="161 588 22 21" fill="none" stroke="#007ac2" stroke-width="1.300"><path d="M172 589.500l9.500 4.800-9.500 4.800-9.500-4.800z"/><path d="M162.500 598.600l9.500 4.800 9.500-4.800"/><path d="M162.500 602.800l9.500 4.800 9.500-4.800"/></svg>
 <svg class="abs" style="left:255px;top:594px" width="12" height="9" viewBox="0 0 12 9" fill="none" stroke="#007ac2" stroke-width="1.400"><path d="M1 1.500l5 5.500 5-5.500"/></svg>
</div>

<div class="abs" style="left:1790px;top:123px;width:1px;height:632px;background:#e6e6e6"></div>
<!-- RIGHT PANEL -->
<div id="rpanel" class="abs">
 <div class="abs" style="left:0;top:1px;width:370px;height:61px;background:#2b2b2b"></div>
 <svg class="abs" style="left:338px;top:28px" width="12" height="8" viewBox="0 0 12 8" fill="none" stroke="#fff" stroke-width="1.500"><path d="M1 1.200l5 5.300 5-5.300"/></svg>
 <div class="abs" style="left:0;top:62px;width:370px;height:61px;background:#fff;border-bottom:1px solid #dcdcdc"></div>
 <div class="abs" style="left:320px;top:62px;width:50px;height:60px;background:#f3f3f3;border:2px solid #007ac2"></div>
 <svg class="abs" style="left:337px;top:84.500px" width="16" height="16" viewBox="0 0 16 16" stroke="#151515" stroke-width="1.300" fill="none"><path d="M.7.700l14.600 14.600M15.300.7L.7 15.300"/></svg>
 <!-- notice -->
 <div class="abs" style="left:0;top:123px;width:370px;height:87px;background:#fff;border-left:3px solid #007ac2;box-shadow:0 4px 8px rgba(0,0,0,.13);z-index:2"></div>
 <svg class="abs" style="left:21px;top:157px;z-index:3" width="14" height="20" viewBox="0 0 14 20" fill="none" stroke="#007ac2" stroke-width="1.100"><path d="M4 13.500c0-2-2.900-3.500-2.900-6.700a5.900 5.900 0 0 1 11.800 0c0 3.200-2.900 4.700-2.900 6.700zM4.300 15.800h5.400M5 18.300h4M7 13.500v-4.500M5.500 8l1.500 1.500 1.500-1.500"/></svg>
 <svg class="abs" style="left:345px;top:161.500px;z-index:3" width="10" height="10" viewBox="0 0 10 10" stroke="#4a4a4a" stroke-width="1.100" fill="none"><path d="M.5.500l9 9M9.500.5l-9 9"/></svg>
 <!-- toggle row -->
 <div class="abs" style="left:0;top:210px;width:370px;height:61px;background:#fff;border-bottom:1px solid #e0e0e0"></div>
 <div class="abs" style="left:330px;top:232.500px;width:30.500px;height:15px;border-radius:8px;background:#007ac2"></div>
 <div class="abs" style="left:347.500px;top:234.500px;width:11px;height:11px;border-radius:6px;background:#fff"></div>
 <!-- opties -->
 <div class="abs" style="left:0;top:281px;width:370px;height:112px;background:#fff;border-bottom:1px solid #dcdcdc"></div>
 <svg class="abs" style="left:334px;top:302.500px" width="12" height="8" viewBox="0 0 12 8" fill="none" stroke="#4a4a4a" stroke-width="1.200"><path d="M1 7l5-5.500 5 5.500"/></svg>
 <svg class="abs" style="left:329px;top:357px" width="8" height="12" viewBox="0 0 8 12" fill="none" stroke="#151515" stroke-width="1.500"><path d="M1.200 1l5.300 5-5.300 5"/></svg>
 <!-- titel -->
 <div class="abs" style="left:0;top:403px;width:370px;height:83px;background:#fff;border-bottom:1px solid #dcdcdc"></div>
 <svg class="abs" style="left:18px;top:426px" width="25" height="26" viewBox="0 0 25 26" fill="none" stroke="#323232" stroke-width="1.100"><path d="M.5 1h24M12.500 1v24.500"/></svg>
 <svg class="abs" style="left:334px;top:441px" width="12" height="8" viewBox="0 0 12 8" fill="none" stroke="#4a4a4a" stroke-width="1.200"><path d="M1 1l5 5.500 5-5.500"/></svg>
 <!-- veldenlijst -->
 <div class="abs" style="left:0;top:486px;width:370px;height:82px;background:#fff;border-bottom:1px solid #dcdcdc"></div>
 <svg class="abs" style="left:0;top:486px" width="370" height="82" viewBox="1420 486 370 82">
  <g fill="#8a8a8a"><circle cx="1431.500" cy="519" r="1.600"/><circle cx="1438.700" cy="519" r="1.600"/><circle cx="1431.500" cy="526.200" r="1.600"/><circle cx="1438.700" cy="526.200" r="1.600"/><circle cx="1431.500" cy="533.400" r="1.600"/><circle cx="1438.700" cy="533.400" r="1.600"/></g>
  <g fill="none" stroke="#323232" stroke-width="1.100"><path d="M1468 511h8.500M1480 511h11M1470 516.500h6.500M1480 516.500h8M1470 522h6.500M1480 522h8M1470 527.500h6.500M1480 527.500h9.500"/><path d="M1466.500 531.500h27v2.700h-27z"/></g>
  <g fill="#323232"><circle cx="1753" cy="525.800" r="1.600"/><circle cx="1760.500" cy="525.800" r="1.600"/><circle cx="1768" cy="525.800" r="1.600"/></g>
 </svg>
 <!-- pill -->
 <div class="abs" style="left:94px;top:600px;width:181px;height:28px;border-radius:14px;background:#fff;box-shadow:0 4px 10px rgba(0,0,0,.10),0 1px 2px rgba(0,0,0,.04)"></div>
 <svg class="abs" style="left:108px;top:608.500px" width="12" height="12" viewBox="0 0 12 12" stroke="#151515" stroke-width="1.200" fill="none"><path d="M6 .5v11M.5 6h11"/></svg>
</div>
<!-- POPUP -->
<div id="popup" class="abs">
 <div class="abs" style="left:0;top:51px;width:575px;height:1px;background:#cfcfcf"></div>
 <svg class="abs" style="left:20px;top:14px" width="22" height="22" viewBox="469 33 22 22" fill="none" stroke="#6a6a6a" stroke-width="1.200"><circle cx="477.500" cy="41.700" r="7"/><path d="M482.600 46.800l6.600 6.200M477.500 38v7.400M473.800 41.700h7.400"/></svg>
 <svg class="abs" style="left:458px;top:74px" width="20" height="12" viewBox="0 0 20 12" fill="none" stroke="#323232" stroke-width="1.500"><path d="M1 11l9-9.500 9 9.500"/></svg>
 <svg class="abs" style="left:499px;top:68px" width="22" height="21" viewBox="0 0 22 21" fill="none" stroke="#6a6a6a" stroke-width="1.200"><path d="M6 5.500v-4.500h15v13.500h-5.500"/><path d="M6 4h15" stroke-width="1"/><path d="M1 6.500h14.500v13.500h-14.500z"/><path d="M1 9.500h14.500" stroke-width="1"/></svg>
 <svg class="abs" style="left:539px;top:72px" width="17" height="15" viewBox="0 0 17 15" stroke="#4a4a4a" stroke-width="1.300" fill="none"><path d="M1 .7l15 13.600M16 .7L1 14.300"/></svg>
 <div class="row d" style="top:118.20px"></div><span class="rt k" style="top:128px;letter-spacing:-0.501px">HAB1</span><span class="rt v" style="top:128px;letter-spacing:0.330px">rbbkam</span>
<div class="row l" style="top:155.98px"></div><span class="rt k" style="top:166px;letter-spacing:-0.501px">HAB2</span><span class="rt v" style="top:166px;letter-spacing:0.030px">1330</span>
<div class="row d" style="top:193.76px"></div><span class="rt k" style="top:203px;letter-spacing:-0.501px">HAB3</span><span class="rt v" style="top:203px;letter-spacing:0.030px">1310</span>
<div class="row l" style="top:231.54px"></div><span class="rt k" style="top:241px;letter-spacing:-0.501px">HAB4</span><span class="rt v" style="top:241px;letter-spacing:0.030px"></span>
<div class="row d" style="top:269.32px"></div><span class="rt k" style="top:279px;letter-spacing:-0.501px">PHAB1</span><span class="rt v" style="top:279px;letter-spacing:0.030px">73</span>
<div class="row l" style="top:307.10px"></div><span class="rt k" style="top:317px;letter-spacing:-0.501px">PHAB2</span><span class="rt v" style="top:317px;letter-spacing:0.030px">25</span>
<div class="row d" style="top:344.88px"></div><span class="rt k" style="top:355px;letter-spacing:-0.501px">PHAB3</span><span class="rt v" style="top:355px;letter-spacing:0.030px">2</span>
<div class="row l" style="top:382.66px"></div><span class="rt k" style="top:392px;letter-spacing:-0.501px">PHAB4</span><span class="rt v" style="top:392px;letter-spacing:0.030px">0</span>
 <div class="abs" style="left:286px;top:118px;width:3px;height:302px;background:rgba(0,0,0,.055)"></div>
</div>
<!-- MAP BUTTONS -->
<div class="mbtn" style="top:596px"><svg class="abs" style="left:10px;top:10px" width="19" height="19" viewBox="0 0 19 19" fill="none" stroke="#555" stroke-width="1.250"><circle cx="7.500" cy="7.500" r="5.500"/><path d="M11.500 11.500l6 6"/></svg></div>
<div class="mbtn" style="top:648px"><svg class="abs" style="left:9px;top:11px" width="22" height="18" viewBox="0 0 22 18" fill="none" stroke="#555" stroke-width="1.200"><path d="M1 1h20v13h-20zM7 17h8M11 14v3"/></svg></div>
<div class="mbtn" style="top:700.500px"><svg class="abs" style="left:10px;top:10px" width="19" height="20" viewBox="0 0 21 22" fill="none" stroke="#555" stroke-width="1.300"><path d="M1 9.500l9.500-8.500 4 3.600v-2.600h3v5.300l2.500 2.200M3 8v13h5v-7h5v7h5v-13"/></svg></div>
<div id="texts">
<span class="t" id="t1" style="left:75.5px;top:21.0px;font-size:20px;font-weight:400;color:#323232;letter-spacing:0.205px;">Kaartlagen</span>
<span class="t" id="t2" style="left:97.1px;top:98.0px;font-size:17.5px;font-weight:400;color:#151515;letter-spacing:0.178px;-webkit-text-stroke:.3px #151515">Aan de slag</span>
<span class="t" id="t3a" style="left:97.1px;top:124.0px;font-size:15px;font-weight:400;color:#6a6a6a;letter-spacing:0.090px;">U kunt kaarten verkennen, lagen</span>
<span class="t" id="t3b" style="left:97.1px;top:144.0px;font-size:15px;font-weight:400;color:#6a6a6a;letter-spacing:0.217px;">toevoegen en meer zonder aan te</span>
<span class="t" id="t3c" style="left:97.1px;top:165.0px;font-size:15px;font-weight:400;color:#6a6a6a;letter-spacing:0.171px;">melden. Om uw werk op te slaan,</span>
<span class="t" id="t3d" style="left:97.1px;top:186.0px;font-size:15px;font-weight:400;color:#6a6a6a;letter-spacing:0.196px;">moet u zich aanmelden voordat u</span>
<span class="t" id="t3e" style="left:97.1px;top:206.0px;font-size:15px;font-weight:400;color:#6a6a6a;letter-spacing:0.087px;">de kaart maakt.</span>
<span class="t" id="t4a" style="left:97.1px;top:242.0px;font-size:15px;font-weight:400;color:#00619b;letter-spacing:0.201px;border-bottom:1px solid #6aa3c8;padding-bottom:2px">Kom meer te weten over Map</span>
<span class="t" id="t4b" style="left:97.1px;top:262.0px;font-size:15px;font-weight:400;color:#00619b;letter-spacing:0.134px;border-bottom:1px solid #6aa3c8;padding-bottom:2px">Viewer</span>
<span class="t" id="t5" style="left:107.0px;top:347.0px;font-size:17.5px;font-weight:400;color:#4a4a4a;letter-spacing:-0.105px;">Passend beheer</span>
<span class="t" id="t6" style="left:127.9px;top:406.0px;font-size:15px;font-weight:400;color:#4a4a4a;letter-spacing:0.138px;">Overzicht</span>
<span class="t" id="t7" style="left:127.9px;top:459.0px;font-size:15px;font-weight:400;color:#4a4a4a;letter-spacing:0.142px;">Habitatcluster</span>
<span class="t" id="t8" style="left:127.9px;top:513.0px;font-size:15px;font-weight:400;color:#4a4a4a;letter-spacing:0.034px;">Habitats</span>
<span class="t" id="t9" style="left:198.0px;top:589.0px;font-size:17.5px;font-weight:400;color:#007ac2;letter-spacing:0.318px;">Toevoegen</span>
<span class="t" id="t10" style="left:1435.8px;top:22.0px;font-size:17.5px;font-weight:400;color:#ffffff;letter-spacing:0.162px;-webkit-text-stroke:.3px #ffffff">Habitats</span>
<span class="t" id="t11" style="left:1434.8px;top:81.0px;font-size:20px;font-weight:400;color:#323232;letter-spacing:-0.014px;">Pop-ups</span>
<span class="t" id="t12a" style="left:1472.0px;top:138.0px;font-size:15px;font-weight:400;color:#6a6a6a;letter-spacing:0.223px;">Pop-ups die zijn opgesteld in Map</span>
<span class="t" id="t12b" style="left:1472.0px;top:158.0px;font-size:15px;font-weight:400;color:#6a6a6a;letter-spacing:0.216px;">Viewer zijn niet compatibel met alle</span>
<span class="t" id="t12c" style="left:1472.0px;top:179.0px;font-size:15px;font-weight:400;color:#6a6a6a;letter-spacing:0.039px;">apps.</span>
<span class="t" id="t13" style="left:1430.0px;top:230.0px;font-size:17.5px;font-weight:400;color:#323232;letter-spacing:0.113px;">Schakel pop-ups in</span>
<span class="t" id="t14" style="left:1434.8px;top:297.0px;font-size:17.5px;font-weight:400;color:#151515;letter-spacing:0.520px;-webkit-text-stroke:.3px #151515">Opties</span>
<span class="t" id="t15" style="left:1447.9px;top:354.0px;font-size:17.5px;font-weight:400;color:#4a4a4a;letter-spacing:0.251px;">Attribuutexpressies</span>
<span class="t" id="t16" style="left:1479.9px;top:419.0px;font-size:17.5px;font-weight:400;color:#151515;letter-spacing:0.196px;-webkit-text-stroke:.3px #151515">Titel</span>
<span class="t" id="t17" style="left:1479.9px;top:448.0px;font-size:15px;font-weight:400;color:#6a6a6a;letter-spacing:0.009px;">Habitats</span>
<span class="t" id="t18" style="left:1509.9px;top:502.0px;font-size:17.5px;font-weight:400;color:#151515;letter-spacing:0.417px;-webkit-text-stroke:.3px #151515">Veldenlijst</span>
<span class="t" id="t19" style="left:1509.9px;top:530.0px;font-size:15px;font-weight:400;color:#6a6a6a;letter-spacing:0.311px;">8/24 velden</span>
<span class="t" id="t20" style="left:1553.6px;top:606.0px;font-size:15px;font-weight:400;color:#323232;letter-spacing:0.348px;">Content toevoegen</span>
<span class="t" id="t21" style="left:494.2px;top:36.0px;font-size:15px;font-weight:400;color:#6a6a6a;letter-spacing:0.153px;">Zoomen naar</span>
<span class="t" id="t22" style="left:467.5px;top:94.0px;font-size:20px;font-weight:400;color:#2e2e2e;letter-spacing:0.328px;-webkit-text-stroke:.55px #2e2e2e">Habitats</span>
</div>
</body></html>
